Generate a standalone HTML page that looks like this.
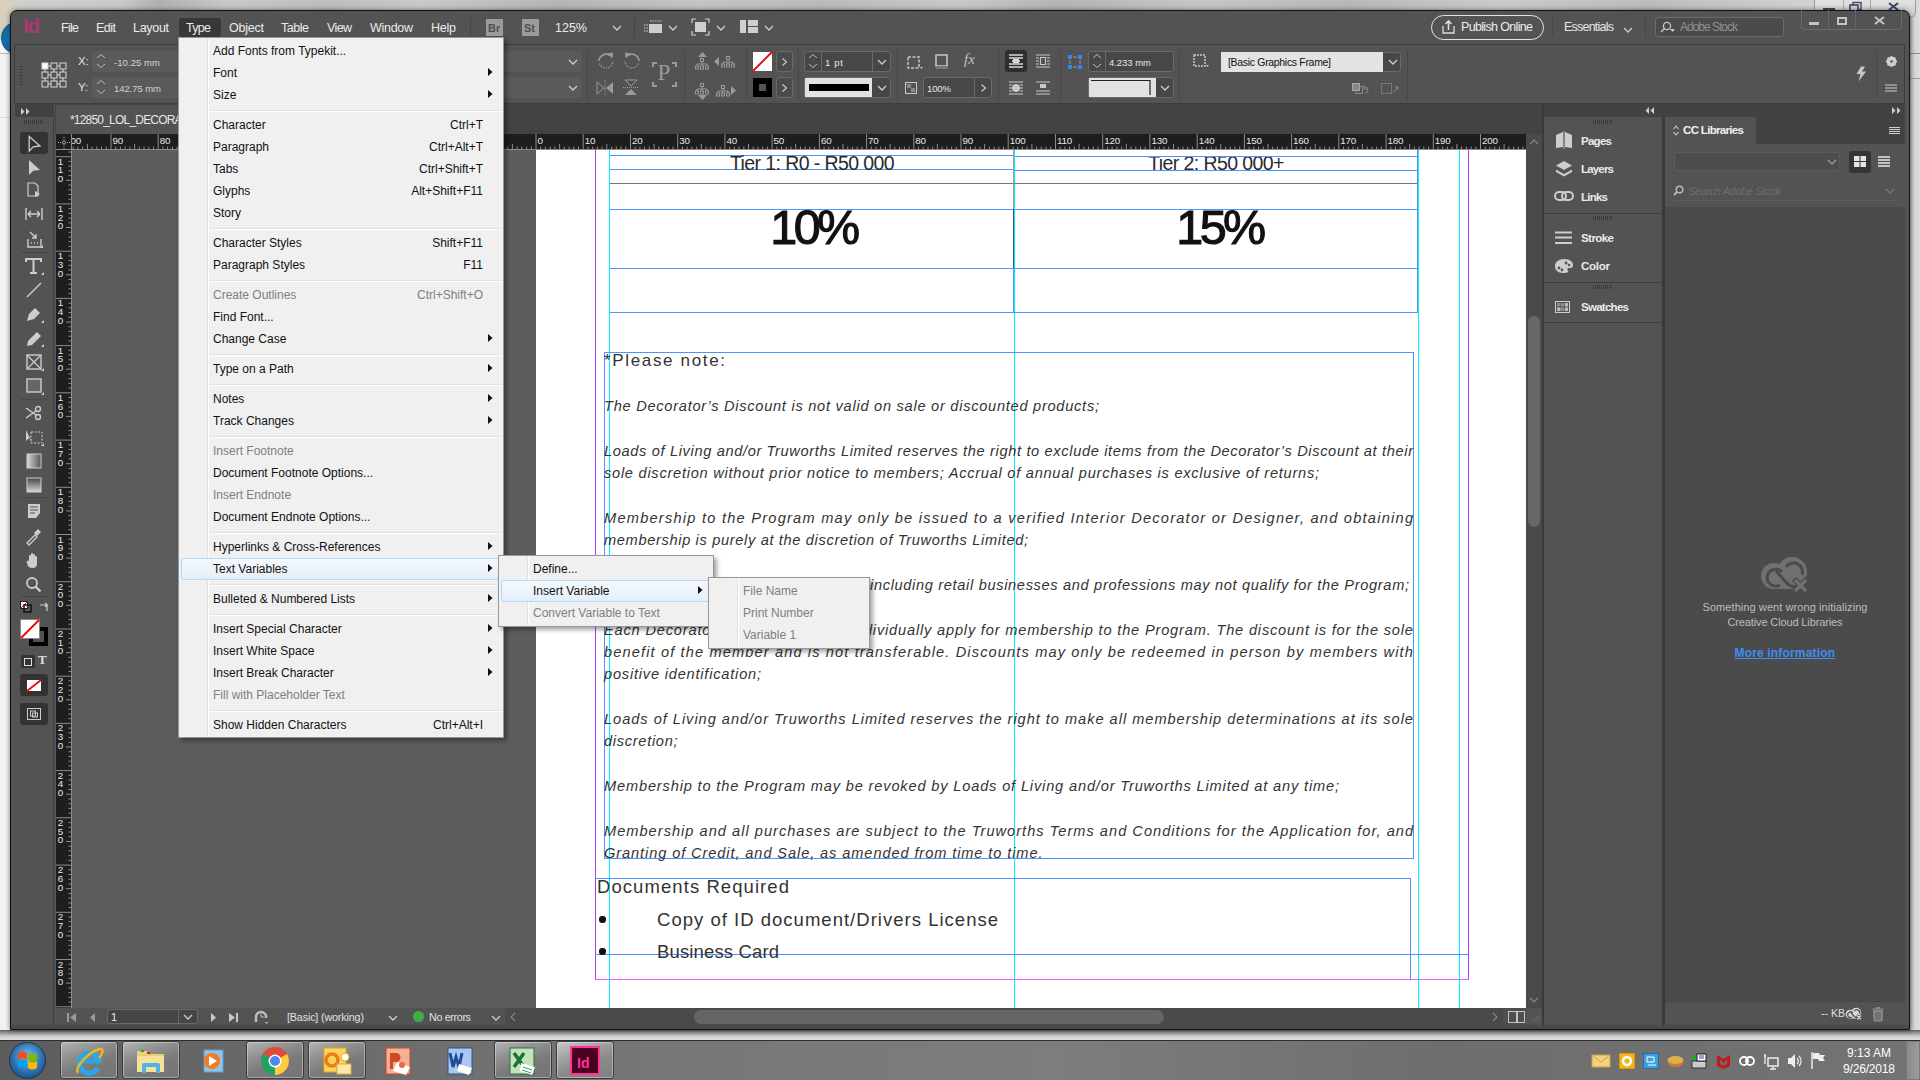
<!DOCTYPE html>
<html><head><meta charset="utf-8">
<style>
*{box-sizing:border-box;margin:0;padding:0}
html,body{width:1920px;height:1080px;overflow:hidden}
body{position:relative;background:#ececec;font-family:"Liberation Sans",sans-serif;font-size:12px;color:#ddd}
.a{position:absolute}
.t{position:absolute;white-space:nowrap;line-height:1}
svg{overflow:visible}
</style></head>
<body>
<div class="a" style="left:0px;top:0px;width:1920px;height:40px;background:linear-gradient(90deg,#d9d0b8 0,#cfcfcf 30px,#c9c9c9 120px,#b0b0b0 160px,#c8c8c8 230px,#bdbdbd 330px,#c9c9c9 420px,#b5b5b5 560px,#c4c4c4 700px,#bababa 820px,#c8c8c8 960px,#b4b4b4 1060px,#c6c6c6 1200px,#b8b8b8 1350px,#cacaca 1500px,#bcbcbc 1650px,#d0d0d0 1800px,#d8d8d8 1920px)"></div>
<div class="a" style="left:0px;top:40px;width:12px;height:1000px;background:#f2f2f2"></div>
<div class="a" style="left:0px;top:53px;width:12px;height:1px;background:#b9b9b9"></div>
<div class="a" style="left:0px;top:117px;width:12px;height:1px;background:#dadada"></div>
<div class="a" style="left:1px;top:22px;width:30px;height:32px;border-radius:50%;background:radial-gradient(circle at 60% 50%,#1e86c0,#0c5d93)"></div>
<div class="a" style="left:1908px;top:0px;width:12px;height:1040px;background:linear-gradient(90deg,#9a9a9a,#d4d4d4 50%,#dedede)"></div>
<div class="a" style="left:1910px;top:53px;width:10px;height:1px;background:#8a8a8a"></div>
<div class="a" style="left:1910px;top:78px;width:10px;height:1px;background:#9a9a9a"></div>
<div class="a" style="left:0px;top:1030px;width:1920px;height:10px;background:linear-gradient(#5e5e5e,#8f8f8f 25%,#c9c9c9 60%,#e6e6e6)"></div>
<div class="a" style="left:1814px;top:-4px;width:102px;height:21px;border:1px solid #9c9c9c;border-radius:0 0 4px 4px;background:linear-gradient(#e6e6e6,#cfcfcf)"></div>
<div class="a" style="left:1843px;top:0px;width:1px;height:16px;background:#a9a9a9"></div>
<div class="a" style="left:1870px;top:0px;width:1px;height:16px;background:#a9a9a9"></div>
<svg class="a" style="left:1888px;top:3px;" width="11" height="7" viewBox="0 0 11 7"><path d="M1 0l9 7M10 0L1 7" stroke="#3d4a66" stroke-width="2.2"/></svg>
<svg class="a" style="left:1849px;top:2px;" width="13" height="9" viewBox="0 0 13 9"><rect x="4" y="0.5" width="8" height="7" fill="none" stroke="#3d4a66" stroke-width="1.4"/><rect x="1" y="3" width="8" height="6" fill="#d6d6d6" stroke="#3d4a66" stroke-width="1.6"/></svg>
<div class="a" style="left:1823px;top:8px;width:12px;height:2px;background:#3d4a66"></div>
<div class="a" style="left:10px;top:10px;width:1900px;height:1020px;background:#535353;border:1px solid #111;border-radius:7px 7px 0 0;box-shadow:0 0 5px rgba(0,0,0,.5)"></div>
<div class="a" style="left:11px;top:1025px;width:1898px;height:4px;background:#4a4a4a"></div>
<div class="t" style="left:23px;top:15.95px;font-size:20.5px;color:#ab3a70;letter-spacing:-1.219px;font-weight:bold;">Id</div>
<div class="a" style="left:179px;top:18px;width:42px;height:19px;background:#383838;border-radius:3px"></div>
<div class="t" style="left:61px;top:22.22px;font-size:12.5px;color:#ececec;letter-spacing:-0.719px;">File</div>
<div class="t" style="left:96px;top:22.22px;font-size:12.5px;color:#ececec;letter-spacing:-0.516px;">Edit</div>
<div class="t" style="left:133px;top:22.22px;font-size:12.5px;color:#ececec;letter-spacing:-0.306px;">Layout</div>
<div class="t" style="left:186px;top:22.22px;font-size:12.5px;color:#ececec;letter-spacing:-0.703px;">Type</div>
<div class="t" style="left:229px;top:22.22px;font-size:12.5px;color:#ececec;letter-spacing:-0.228px;">Object</div>
<div class="t" style="left:281px;top:22.22px;font-size:12.5px;color:#ececec;letter-spacing:-0.473px;">Table</div>
<div class="t" style="left:327px;top:22.22px;font-size:12.5px;color:#ececec;letter-spacing:-0.625px;">View</div>
<div class="t" style="left:370px;top:22.22px;font-size:12.5px;color:#ececec;letter-spacing:-0.294px;">Window</div>
<div class="t" style="left:431px;top:22.22px;font-size:12.5px;color:#ececec;letter-spacing:-0.240px;">Help</div>
<div class="a" style="left:470px;top:17px;width:1px;height:20px;background:#454545"></div>
<div class="a" style="left:486px;top:19px;width:17px;height:17px;background:#9b9b9b"></div>
<div class="t" style="left:488px;top:22.69px;font-size:11px;color:#4e4e4e;font-weight:bold;">Br</div>
<div class="a" style="left:522px;top:19px;width:17px;height:17px;background:#9b9b9b"></div>
<div class="t" style="left:524px;top:22.69px;font-size:11px;color:#4e4e4e;font-weight:bold;">St</div>
<div class="t" style="left:555px;top:22.22px;font-size:12.5px;color:#ececec;letter-spacing:0.005px;">125%</div>
<svg class="a" style="left:612px;top:25px;" width="10" height="6" viewBox="0 0 10 6"><path d="M1 1 L5.0 5 L9 1" fill="none" stroke="#cfcfcf" stroke-width="1.3"/></svg>
<div class="a" style="left:634px;top:17px;width:1px;height:20px;background:#444"></div>
<svg class="a" style="left:644px;top:20px;" width="20" height="14" viewBox="0 0 20 14"><rect x="5" y="4" width="13" height="9" fill="#cfcfcf"/><path d="M0 5h4M0 8h4M0 11h4M6 1h12" stroke="#cfcfcf" stroke-dasharray="1.5 1"/></svg>
<svg class="a" style="left:668px;top:25px;" width="10" height="6" viewBox="0 0 10 6"><path d="M1 1 L5.0 5 L9 1" fill="none" stroke="#cfcfcf" stroke-width="1.3"/></svg>
<svg class="a" style="left:692px;top:19px;" width="17" height="16" viewBox="0 0 17 16"><rect x="3" y="3" width="11" height="10" fill="#cfcfcf"/><path d="M0 4V0h4M13 0h4v4M17 12v4h-4M4 16H0v-4" fill="none" stroke="#cfcfcf" stroke-width="1.2"/></svg>
<svg class="a" style="left:716px;top:25px;" width="10" height="6" viewBox="0 0 10 6"><path d="M1 1 L5.0 5 L9 1" fill="none" stroke="#cfcfcf" stroke-width="1.3"/></svg>
<svg class="a" style="left:740px;top:20px;" width="18" height="13" viewBox="0 0 18 13"><rect x="0" y="0" width="6" height="13" fill="#cfcfcf"/><rect x="8" y="0" width="10" height="6" fill="#cfcfcf"/><rect x="8" y="7" width="10" height="6" fill="#cfcfcf"/></svg>
<svg class="a" style="left:764px;top:25px;" width="10" height="6" viewBox="0 0 10 6"><path d="M1 1 L5.0 5 L9 1" fill="none" stroke="#cfcfcf" stroke-width="1.3"/></svg>
<div class="a" style="left:1431px;top:15px;width:113px;height:25px;border:1.5px solid #e3e3e3;border-radius:13px"></div>
<svg class="a" style="left:1442px;top:20px;" width="13" height="14" viewBox="0 0 13 14"><path d="M1 6v7h11V6" fill="none" stroke="#ddd" stroke-width="1.3"/><path d="M6.5 10V1M3.5 4l3-3 3 3" fill="none" stroke="#ddd" stroke-width="1.6"/></svg>
<div class="t" style="left:1461px;top:21.42px;font-size:12.5px;color:#ececec;letter-spacing:-0.662px;">Publish Online</div>
<div class="a" style="left:1552px;top:17px;width:1px;height:20px;background:#474747"></div>
<div class="t" style="left:1564px;top:21.42px;font-size:12.5px;color:#e6e6e6;letter-spacing:-0.776px;">Essentials</div>
<svg class="a" style="left:1623px;top:27px;" width="10" height="6" viewBox="0 0 10 6"><path d="M1 1 L5.0 5 L9 1" fill="none" stroke="#cfcfcf" stroke-width="1.3"/></svg>
<div class="a" style="left:1645px;top:17px;width:1px;height:20px;background:#474747"></div>
<div class="a" style="left:1655px;top:17px;width:129px;height:20px;background:#4b4b4b;border:1px solid #6a6a6a;border-radius:3px"></div>
<svg class="a" style="left:1660px;top:21px;" width="16" height="12" viewBox="0 0 16 12"><circle cx="7" cy="5" r="3.6" fill="none" stroke="#c8c8c8" stroke-width="1.3"/><path d="M4.5 7.5L1 11" stroke="#c8c8c8" stroke-width="1.5"/><path d="M10 8h5l-2.5 3z" fill="#c8c8c8"/></svg>
<div class="t" style="left:1680px;top:20.84px;font-size:12px;color:#8f8f8f;letter-spacing:-1.005px;">Adobe Stock</div>
<div class="a" style="left:1801px;top:10px;width:101px;height:20px;border:1px solid #6a6a6a;border-top:none;border-radius:0 0 4px 4px"></div>
<div class="a" style="left:1828px;top:10px;width:1px;height:19px;background:#666"></div>
<div class="a" style="left:1855px;top:10px;width:1px;height:19px;background:#666"></div>
<div class="a" style="left:1809px;top:22px;width:10px;height:3px;background:#c4c4c4"></div>
<div class="a" style="left:1837px;top:17px;width:10px;height:8px;border:2px solid #c4c4c4"></div>
<svg class="a" style="left:1874px;top:16px;" width="11" height="9" viewBox="0 0 11 9"><path d="M1 1l9 7M10 1L1 8" stroke="#c4c4c4" stroke-width="2"/></svg>
<div class="a" style="left:14px;top:44px;width:1891px;height:60px;background:#535353;border:1px solid #3e3e3e"></div>
<div class="a" style="left:19px;top:66px;width:4px;height:1px;background:#3d3d3d"></div>
<div class="a" style="left:19px;top:69px;width:4px;height:1px;background:#3d3d3d"></div>
<div class="a" style="left:19px;top:72px;width:4px;height:1px;background:#3d3d3d"></div>
<div class="a" style="left:19px;top:75px;width:4px;height:1px;background:#3d3d3d"></div>
<div class="a" style="left:19px;top:78px;width:4px;height:1px;background:#3d3d3d"></div>
<div class="a" style="left:19px;top:81px;width:4px;height:1px;background:#3d3d3d"></div>
<div class="a" style="left:19px;top:84px;width:4px;height:1px;background:#3d3d3d"></div>
<svg class="a" style="left:41px;top:62px;" width="27" height="26" viewBox="0 0 27 26"><rect x="1" y="1" width="6" height="6" fill="#fff" stroke="#d8d8d8" stroke-width="1"/><rect x="10" y="1" width="6" height="6" fill="none" stroke="#d8d8d8" stroke-width="1"/><rect x="19" y="1" width="6" height="6" fill="none" stroke="#d8d8d8" stroke-width="1"/><rect x="1" y="10" width="6" height="6" fill="none" stroke="#d8d8d8" stroke-width="1"/><rect x="10" y="10" width="6" height="6" fill="none" stroke="#d8d8d8" stroke-width="1"/><rect x="19" y="10" width="6" height="6" fill="none" stroke="#d8d8d8" stroke-width="1"/><rect x="1" y="19" width="6" height="6" fill="none" stroke="#d8d8d8" stroke-width="1"/><rect x="10" y="19" width="6" height="6" fill="none" stroke="#d8d8d8" stroke-width="1"/><rect x="19" y="19" width="6" height="6" fill="none" stroke="#d8d8d8" stroke-width="1"/><path d="M7 4h3M16 4h3M7 13h3M16 13h3M7 22h3M16 22h3M4 7v3M13 7v3M22 7v3M4 16v3M13 16v3M22 16v3" stroke="#d8d8d8"/></svg>
<div class="t" style="left:78px;top:56.27px;font-size:11.5px;color:#e0e0e0;">X:</div>
<div class="t" style="left:78px;top:82.27px;font-size:11.5px;color:#e0e0e0;">Y:</div>
<div class="a" style="left:92px;top:51px;width:90px;height:21px;background:#5a5a5a;border-radius:3px"></div>
<svg class="a" style="left:96px;top:53px;" width="10" height="16" viewBox="0 0 10 16"><path d="M1 5l4-3.5 4 3.5M1 11l4 3.5 4-3.5" fill="none" stroke="#bdbdbd" stroke-width="1"/></svg>
<div class="t" style="left:114px;top:57.96px;font-size:9.5px;color:#d2d2d2;letter-spacing:0.074px;">-10.25 mm</div>
<div class="a" style="left:92px;top:77px;width:90px;height:21px;background:#5a5a5a;border-radius:3px"></div>
<svg class="a" style="left:96px;top:79px;" width="10" height="16" viewBox="0 0 10 16"><path d="M1 5l4-3.5 4 3.5M1 11l4 3.5 4-3.5" fill="none" stroke="#bdbdbd" stroke-width="1"/></svg>
<div class="t" style="left:114px;top:83.96px;font-size:9.5px;color:#d2d2d2;letter-spacing:-0.066px;">142.75 mm</div>
<div class="a" style="left:500px;top:51px;width:82px;height:21px;background:#5a5a5a;border-radius:3px"></div>
<svg class="a" style="left:568px;top:59px;" width="10" height="6" viewBox="0 0 10 6"><path d="M1 1 L5.0 5 L9 1" fill="none" stroke="#cfcfcf" stroke-width="1.3"/></svg>
<div class="a" style="left:500px;top:77px;width:82px;height:21px;background:#5a5a5a;border-radius:3px"></div>
<svg class="a" style="left:568px;top:85px;" width="10" height="6" viewBox="0 0 10 6"><path d="M1 1 L5.0 5 L9 1" fill="none" stroke="#cfcfcf" stroke-width="1.3"/></svg>
<div class="a" style="left:587px;top:49px;width:1px;height:51px;background:#474747"></div>
<svg class="a" style="left:597px;top:52px;" width="18" height="18" viewBox="0 0 18 18"><path d="M2 9A7 7 0 0 1 13 3.5" fill="none" stroke="#9a9a9a" stroke-width="1.6"/><path d="M2.5 11.5A7 7 0 0 0 16 9" fill="none" stroke="#9a9a9a" stroke-width="1.4" stroke-dasharray="1.3 1.3"/><path d="M10 1.5l6-1-0.5 6z" fill="#9a9a9a"/></svg>
<svg class="a" style="left:623px;top:52px;" width="18" height="18" viewBox="0 0 18 18"><path d="M16 9A7 7 0 0 0 5 3.5" fill="none" stroke="#9a9a9a" stroke-width="1.6"/><path d="M15.5 11.5A7 7 0 0 1 2 9" fill="none" stroke="#9a9a9a" stroke-width="1.4" stroke-dasharray="1.3 1.3"/><path d="M8 1.5l-6-1 0.5 6z" fill="#9a9a9a"/></svg>
<svg class="a" style="left:596px;top:80px;" width="18" height="16" viewBox="0 0 18 16"><path d="M1 2l7 6-7 6z" fill="none" stroke="#9a9a9a"/><path d="M17 2l-7 6 7 6z" fill="#9a9a9a"/><path d="M9 0v16" stroke="#9a9a9a" stroke-dasharray="1 1"/></svg>
<svg class="a" style="left:623px;top:79px;" width="16" height="17" viewBox="0 0 16 17"><path d="M2 1h12l-6 6z" fill="none" stroke="#9a9a9a"/><path d="M2 16h12l-6-6z" fill="#9a9a9a"/><path d="M0 8.5h16" stroke="#9a9a9a" stroke-dasharray="1 1"/></svg>
<svg class="a" style="left:652px;top:62px;" width="25" height="25" viewBox="0 0 25 25"><path d="M1 5V1h4M20 1h4v4M24 20v4h-4M5 24H1v-4" fill="none" stroke="#9a9a9a" stroke-width="2"/></svg>
<div class="t" style="left:657.5px;top:60.5px;font-size:23px;color:#9a9a9a;font-family:'Liberation Serif',serif">P</div>
<div class="a" style="left:684px;top:49px;width:1px;height:51px;background:#474747"></div>
<svg class="a" style="left:695px;top:58px;" width="14" height="11" viewBox="0 0 14 11"><rect x="5.5" y="0.5" width="3" height="3" fill="none" stroke="#9a9a9a"/><path d="M7 4v2M2 6h10M2 6v2M7 6v2M12 6v2" stroke="#9a9a9a"/><rect x="0.5" y="8" width="3" height="3" fill="none" stroke="#9a9a9a"/><rect x="5.5" y="8" width="3" height="3" fill="none" stroke="#9a9a9a"/><rect x="10.5" y="8" width="3" height="3" fill="none" stroke="#9a9a9a"/></svg>
<svg class="a" style="left:698px;top:52px;" width="9" height="5" viewBox="0 0 9 5"><path d="M0 5h9L4.5 0z" fill="#9a9a9a"/></svg>
<svg class="a" style="left:721px;top:56px;" width="14" height="11" viewBox="0 0 14 11"><rect x="5.5" y="0.5" width="3" height="3" fill="none" stroke="#9a9a9a"/><path d="M7 4v2M2 6h10M2 6v2M7 6v2M12 6v2" stroke="#9a9a9a"/><rect x="0.5" y="8" width="3" height="3" fill="none" stroke="#9a9a9a"/><rect x="5.5" y="8" width="3" height="3" fill="none" stroke="#9a9a9a"/><rect x="10.5" y="8" width="3" height="3" fill="none" stroke="#9a9a9a"/></svg>
<svg class="a" style="left:714px;top:57px;" width="5" height="9" viewBox="0 0 5 9"><path d="M5 0v9L0 4.5z" fill="#9a9a9a"/></svg>
<svg class="a" style="left:695px;top:83px;" width="14" height="11" viewBox="0 0 14 11"><rect x="5.5" y="0.5" width="3" height="3" fill="none" stroke="#9a9a9a"/><path d="M7 4v2M2 6h10M2 6v2M7 6v2M12 6v2" stroke="#9a9a9a"/><rect x="0.5" y="8" width="3" height="3" fill="none" stroke="#9a9a9a"/><rect x="5.5" y="8" width="3" height="3" fill="none" stroke="#9a9a9a"/><rect x="10.5" y="8" width="3" height="3" fill="none" stroke="#9a9a9a"/></svg>
<svg class="a" style="left:698px;top:95px;" width="9" height="5" viewBox="0 0 9 5"><path d="M0 0h9L4.5 5z" fill="#9a9a9a"/></svg>
<svg class="a" style="left:716px;top:85px;" width="14" height="11" viewBox="0 0 14 11"><rect x="5.5" y="0.5" width="3" height="3" fill="none" stroke="#9a9a9a"/><path d="M7 4v2M2 6h10M2 6v2M7 6v2M12 6v2" stroke="#9a9a9a"/><rect x="0.5" y="8" width="3" height="3" fill="none" stroke="#9a9a9a"/><rect x="5.5" y="8" width="3" height="3" fill="none" stroke="#9a9a9a"/><rect x="10.5" y="8" width="3" height="3" fill="none" stroke="#9a9a9a"/></svg>
<svg class="a" style="left:731px;top:86px;" width="5" height="9" viewBox="0 0 5 9"><path d="M0 0v9L5 4.5z" fill="#9a9a9a"/></svg>
<div class="a" style="left:746px;top:49px;width:1px;height:51px;background:#474747"></div>
<div class="a" style="left:753px;top:52px;width:19px;height:19px;background:#fff"></div>
<svg class="a" style="left:753px;top:52px;" width="19" height="19" viewBox="0 0 19 19"><path d="M0 19L19 0" stroke="#e00" stroke-width="1.8"/></svg>
<div class="a" style="left:753px;top:78px;width:19px;height:19px;background:#000"></div>
<div class="a" style="left:759px;top:84px;width:7px;height:7px;background:#555"></div>
<div class="a" style="left:776px;top:51px;width:17px;height:21px;border:1px solid #6a6a6a;border-radius:3px;background:#4b4b4b"></div>
<svg class="a" style="left:782px;top:58px;" width="5" height="8" viewBox="0 0 5 8"><path d="M0.5 0.5l4 3.5-4 3.5" fill="none" stroke="#cfcfcf" stroke-width="1.1"/></svg>
<div class="a" style="left:776px;top:77px;width:17px;height:21px;border:1px solid #6a6a6a;border-radius:3px;background:#4b4b4b"></div>
<svg class="a" style="left:782px;top:84px;" width="5" height="8" viewBox="0 0 5 8"><path d="M0.5 0.5l4 3.5-4 3.5" fill="none" stroke="#cfcfcf" stroke-width="1.1"/></svg>
<div class="a" style="left:798px;top:49px;width:1px;height:51px;background:#474747"></div>
<div class="a" style="left:804px;top:51px;width:87px;height:21px;border:1px solid #6a6a6a;border-radius:3px;background:#474747"></div>
<div class="a" style="left:821px;top:52px;width:1px;height:19px;background:#6a6a6a"></div>
<div class="a" style="left:872px;top:52px;width:1px;height:19px;background:#6a6a6a"></div>
<svg class="a" style="left:808px;top:53px;" width="10" height="16" viewBox="0 0 10 16"><path d="M1 5l4-3.5 4 3.5M1 11l4 3.5 4-3.5" fill="none" stroke="#bdbdbd" stroke-width="1"/></svg>
<div class="t" style="left:825px;top:57.96px;font-size:9.5px;color:#e8e8e8;letter-spacing:0.714px;">1 pt</div>
<svg class="a" style="left:877px;top:59px;" width="10" height="6" viewBox="0 0 10 6"><path d="M1 1 L5.0 5 L9 1" fill="none" stroke="#cfcfcf" stroke-width="1.3"/></svg>
<div class="a" style="left:804px;top:77px;width:87px;height:21px;border:1px solid #6a6a6a;border-radius:3px;background:#474747"></div>
<div class="a" style="left:805px;top:78px;width:67px;height:19px;background:#e2e2e2"></div>
<div class="a" style="left:809px;top:84px;width:60px;height:7px;background:#000"></div>
<svg class="a" style="left:877px;top:85px;" width="10" height="6" viewBox="0 0 10 6"><path d="M1 1 L5.0 5 L9 1" fill="none" stroke="#cfcfcf" stroke-width="1.3"/></svg>
<div class="a" style="left:897px;top:49px;width:1px;height:51px;background:#474747"></div>
<svg class="a" style="left:906px;top:55px;" width="17" height="15" viewBox="0 0 17 15"><rect x="2" y="2" width="11" height="11" fill="none" stroke="#c8c8c8" stroke-width="1.5" stroke-dasharray="3 1.5"/><path d="M14 12h3l-1.5 2z" fill="#c8c8c8"/></svg>
<svg class="a" style="left:935px;top:54px;" width="14" height="16" viewBox="0 0 14 16"><rect x="1" y="1" width="11" height="11" fill="none" stroke="#c8c8c8" stroke-width="1.5"/><rect x="1" y="12" width="12" height="3" fill="#777"/></svg>
<div class="t" style="left:964px;top:52px;font-size:15px;color:#c0c0c0;font-style:italic;font-family:'Liberation Serif',serif">fx</div>
<svg class="a" style="left:905px;top:82px;" width="12" height="12" viewBox="0 0 12 12"><rect x="0.5" y="0.5" width="11" height="11" fill="none" stroke="#c8c8c8"/><rect x="2" y="2" width="4" height="4" fill="#888"/><rect x="6" y="6" width="4" height="4" fill="#888"/></svg>
<div class="a" style="left:923px;top:77px;width:69px;height:21px;border:1px solid #6a6a6a;border-radius:3px;background:#474747"></div>
<div class="a" style="left:974px;top:78px;width:1px;height:19px;background:#6a6a6a"></div>
<div class="t" style="left:927px;top:83.96px;font-size:9.5px;color:#e8e8e8;letter-spacing:-0.104px;">100%</div>
<svg class="a" style="left:981px;top:84px;" width="5" height="8" viewBox="0 0 5 8"><path d="M0.5 0.5l4 3.5-4 3.5" fill="none" stroke="#cfcfcf" stroke-width="1.1"/></svg>
<div class="a" style="left:998px;top:49px;width:1px;height:51px;background:#474747"></div>
<div class="a" style="left:1005px;top:50px;width:22px;height:22px;background:#2f2f2f;border-radius:3px"></div>
<svg class="a" style="left:1009px;top:54px;" width="14" height="14" viewBox="0 0 14 14"><path d="M0 1h14M0 4h14M0 10h14M0 13h14M3 7h8" stroke="#d8d8d8" stroke-width="1.3"/><rect x="4" y="5" width="6" height="4" fill="#d8d8d8"/></svg>
<svg class="a" style="left:1036px;top:54px;" width="14" height="14" viewBox="0 0 14 14"><path d="M0 1h14M0 13h14M0 4h3M11 4h3M0 7h3M11 7h3M0 10h3M11 10h3" stroke="#c8c8c8" stroke-width="1.2"/><rect x="4.5" y="3.5" width="5" height="7" fill="none" stroke="#c8c8c8"/></svg>
<svg class="a" style="left:1009px;top:81px;" width="14" height="14" viewBox="0 0 14 14"><path d="M0 1h14M0 13h14M0 4h3M11 4h3M0 7h3M11 7h3M0 10h3M11 10h3" stroke="#c8c8c8" stroke-width="1.2"/><circle cx="7" cy="7" r="4" fill="#c8c8c8"/></svg>
<svg class="a" style="left:1036px;top:81px;" width="14" height="14" viewBox="0 0 14 14"><path d="M0 1h14M0 10h14M0 13h14" stroke="#c8c8c8" stroke-width="1.2"/><rect x="4" y="3" width="6" height="4" fill="#c8c8c8"/></svg>
<div class="a" style="left:1060px;top:49px;width:1px;height:51px;background:#474747"></div>
<svg class="a" style="left:1068px;top:55px;" width="14" height="14" viewBox="0 0 14 14"><rect x="0" y="0" width="4" height="4" fill="#2d8ceb"/><rect x="10" y="0" width="4" height="4" fill="#2d8ceb"/><rect x="0" y="10" width="4" height="4" fill="#2d8ceb"/><rect x="10" y="10" width="4" height="4" fill="#2d8ceb"/><path d="M5 2h4M5 12h4M2 5v4M12 5v4" stroke="#999"/></svg>
<div class="a" style="left:1088px;top:51px;width:86px;height:21px;border:1px solid #6a6a6a;border-radius:3px;background:#474747"></div>
<div class="a" style="left:1105px;top:52px;width:1px;height:19px;background:#6a6a6a"></div>
<svg class="a" style="left:1092px;top:53px;" width="10" height="16" viewBox="0 0 10 16"><path d="M1 5l4-3.5 4 3.5M1 11l4 3.5 4-3.5" fill="none" stroke="#bdbdbd" stroke-width="1"/></svg>
<div class="t" style="left:1109px;top:57.96px;font-size:9.5px;color:#e8e8e8;letter-spacing:-0.036px;">4.233 mm</div>
<div class="a" style="left:1088px;top:77px;width:86px;height:21px;border:1px solid #6a6a6a;border-radius:3px;background:#474747"></div>
<div class="a" style="left:1089px;top:78px;width:67px;height:19px;background:#e2e2e2"></div>
<svg class="a" style="left:1090px;top:80px;" width="62" height="15" viewBox="0 0 62 15"><path d="M1 0.5H60V15" fill="none" stroke="#222" stroke-width="1.2"/></svg>
<svg class="a" style="left:1160px;top:85px;" width="10" height="6" viewBox="0 0 10 6"><path d="M1 1 L5.0 5 L9 1" fill="none" stroke="#cfcfcf" stroke-width="1.3"/></svg>
<div class="a" style="left:1179px;top:49px;width:1px;height:51px;background:#474747"></div>
<svg class="a" style="left:1193px;top:54px;" width="16" height="14" viewBox="0 0 16 14"><rect x="1" y="1" width="11" height="11" fill="none" stroke="#c8c8c8" stroke-width="1.5" stroke-dasharray="2 1"/><path d="M13 11h3l-1.5 2z" fill="#c8c8c8"/></svg>
<div class="a" style="left:1221px;top:52px;width:180px;height:20px;border:1px solid #6a6a6a;border-radius:3px;background:#474747"></div>
<div class="a" style="left:1221px;top:52px;width:162px;height:20px;background:#e3e3e3"></div>
<div class="t" style="left:1228px;top:57.11px;font-size:10.5px;color:#111;letter-spacing:-0.319px;">[Basic Graphics Frame]</div>
<svg class="a" style="left:1388px;top:59px;" width="10" height="6" viewBox="0 0 10 6"><path d="M1 1 L5.0 5 L9 1" fill="none" stroke="#cfcfcf" stroke-width="1.3"/></svg>
<svg class="a" style="left:1352px;top:83px;" width="20" height="12" viewBox="0 0 20 12"><rect x="0.5" y="0.5" width="7" height="7" fill="#888" stroke="#aaa"/><rect x="3.5" y="3.5" width="7" height="7" fill="none" stroke="#888"/><path d="M13 4a3 3 0 1 1 0 6" fill="none" stroke="#888"/><path d="M12 2v4h3" fill="none" stroke="#888"/></svg>
<svg class="a" style="left:1381px;top:83px;" width="18" height="12" viewBox="0 0 18 12"><rect x="0.5" y="0.5" width="10" height="10" fill="none" stroke="#888" stroke-dasharray="2 1"/><path d="M12 10l5-6M14 4h3v3" stroke="#888" fill="none"/></svg>
<div class="a" style="left:1407px;top:49px;width:1px;height:51px;background:#474747"></div>
<svg class="a" style="left:1856px;top:66px;" width="11" height="16" viewBox="0 0 11 16"><path d="M5 0.5L0.5 8h4L2.5 15.5 10 5.5H6l3-5z" fill="#c8c8c8"/></svg>
<div class="a" style="left:1876px;top:50px;width:1px;height:48px;background:#474747"></div>
<svg class="a" style="left:1886px;top:56px;" width="11" height="11" viewBox="0 0 11 11"><circle cx="5.5" cy="5.5" r="3.6" fill="none" stroke="#d0d0d0" stroke-width="2.4"/><path d="M5.5 0v11M0 5.5h11M1.6 1.6l7.8 7.8M9.4 1.6l-7.8 7.8" stroke="#d0d0d0" stroke-width="1.8"/><circle cx="5.5" cy="5.5" r="1.3" fill="#535353"/></svg>
<svg class="a" style="left:1885px;top:84px;" width="12" height="8" viewBox="0 0 12 8"><path d="M0 1h12M0 4h12M0 7h12" stroke="#d0d0d0" stroke-width="1.1"/></svg>
<div class="a" style="left:15px;top:104px;width:39px;height:921px;background:#535353;border-right:1px solid #3e3e3e"></div>
<div class="a" style="left:15px;top:104px;width:39px;height:13px;background:#424242"></div>
<svg class="a" style="left:21px;top:108px;" width="10" height="7" viewBox="0 0 10 7"><path d="M0 0l3.5 3.5L0 7zM5 0l3.5 3.5L5 7z" fill="#cfcfcf"/></svg>
<div class="a" style="left:24px;top:120px;width:1px;height:4px;background:#3a3a3a"></div>
<div class="a" style="left:26px;top:120px;width:1px;height:4px;background:#3a3a3a"></div>
<div class="a" style="left:28px;top:120px;width:1px;height:4px;background:#3a3a3a"></div>
<div class="a" style="left:30px;top:120px;width:1px;height:4px;background:#3a3a3a"></div>
<div class="a" style="left:32px;top:120px;width:1px;height:4px;background:#3a3a3a"></div>
<div class="a" style="left:34px;top:120px;width:1px;height:4px;background:#3a3a3a"></div>
<div class="a" style="left:36px;top:120px;width:1px;height:4px;background:#3a3a3a"></div>
<div class="a" style="left:38px;top:120px;width:1px;height:4px;background:#3a3a3a"></div>
<div class="a" style="left:40px;top:120px;width:1px;height:4px;background:#3a3a3a"></div>
<div class="a" style="left:42px;top:120px;width:1px;height:4px;background:#3a3a3a"></div>
<div class="a" style="left:20px;top:132px;width:28px;height:22px;background:#333;border-radius:3px"></div>
<svg class="a" style="left:28px;top:135px;" width="13" height="17" viewBox="0 0 13 17"><path d="M1.2 1.5V16l4-4.2 6.8-0.8z" fill="none" stroke="#cdcdcd" stroke-width="1.3" stroke-linejoin="miter"/></svg>
<svg class="a" style="left:28px;top:159px;" width="13" height="17" viewBox="0 0 13 17"><path d="M1 1V16l4.2-4.2 6.8-0.8z" fill="#cdcdcd"/></svg>
<svg class="a" style="left:27px;top:182px;" width="14" height="16" viewBox="0 0 14 16"><path d="M1 1h7l3 3v10H1z" fill="none" stroke="#cdcdcd" stroke-width="1.2"/><path d="M8 9l5 3-5 3z" fill="#cdcdcd"/></svg>
<svg class="a" style="left:25px;top:208px;" width="18" height="12" viewBox="0 0 18 12"><path d="M1 0v12M17 0v12M3 6h12M3 6l3-3M3 6l3 3M15 6l-3-3M15 6l-3 3" fill="none" stroke="#cdcdcd" stroke-width="1.4"/></svg>
<svg class="a" style="left:26px;top:231px;" width="17" height="17" viewBox="0 0 17 17"><path d="M2 8v8h13V8" fill="none" stroke="#cdcdcd" stroke-width="1.4"/><path d="M4 1l6 6M10 3v4H6" fill="none" stroke="#cdcdcd" stroke-width="1.4"/><path d="M5 12h1M8 12h1M11 12h1" stroke="#cdcdcd" stroke-width="1.5"/><path d="M17 17h-3l3-3z" fill="#cdcdcd"/></svg>
<div class="a" style="left:20px;top:252px;width:29px;height:1px;background:#474747"></div>
<svg class="a" style="left:25px;top:258px;" width="19" height="17" viewBox="0 0 19 17"><path d="M1 4V1h15v3M8.5 1v14M5 15h7" fill="none" stroke="#cdcdcd" stroke-width="2"/><path d="M19 17h-3l3-3z" fill="#cdcdcd"/></svg>
<svg class="a" style="left:26px;top:282px;" width="16" height="16" viewBox="0 0 16 16"><path d="M1 15L15 1" stroke="#cdcdcd" stroke-width="1.5"/></svg>
<svg class="a" style="left:26px;top:306px;" width="18" height="17" viewBox="0 0 18 17"><path d="M1 15l2-7 6-6 5 5-6 6z" fill="#cdcdcd"/><path d="M18 17h-3l3-3z" fill="#cdcdcd"/></svg>
<svg class="a" style="left:26px;top:330px;" width="18" height="17" viewBox="0 0 18 17"><path d="M1 16l1-5 9-9 4 4-9 9z" fill="#cdcdcd"/><path d="M18 17h-3l3-3z" fill="#cdcdcd"/></svg>
<svg class="a" style="left:26px;top:354px;" width="18" height="17" viewBox="0 0 18 17"><rect x="1" y="1" width="14" height="14" fill="none" stroke="#cdcdcd" stroke-width="1.4"/><path d="M1 1l14 14M15 1L1 15" stroke="#cdcdcd" stroke-width="1.2"/><path d="M18 17h-3l3-3z" fill="#cdcdcd"/></svg>
<svg class="a" style="left:26px;top:378px;" width="18" height="17" viewBox="0 0 18 17"><rect x="1" y="1" width="14" height="13" fill="#666" stroke="#cdcdcd" stroke-width="1.4"/><path d="M18 17h-3l3-3z" fill="#cdcdcd"/></svg>
<div class="a" style="left:20px;top:399px;width:29px;height:1px;background:#474747"></div>
<svg class="a" style="left:25px;top:405px;" width="18" height="16" viewBox="0 0 18 16"><circle cx="13" cy="4" r="2.5" fill="none" stroke="#cdcdcd" stroke-width="1.4"/><circle cx="13" cy="12" r="2.5" fill="none" stroke="#cdcdcd" stroke-width="1.4"/><path d="M1 3l10 7M1 13l10-7" stroke="#cdcdcd" stroke-width="1.4"/></svg>
<svg class="a" style="left:25px;top:429px;" width="19" height="17" viewBox="0 0 19 17"><path d="M1 1v11l3-3 3 4" fill="#cdcdcd"/><rect x="6" y="3" width="11" height="11" fill="none" stroke="#cdcdcd" stroke-dasharray="2 1.5"/><path d="M19 17h-3l3-3z" fill="#cdcdcd"/></svg>
<svg class="a" style="left:26px;top:453px;" width="16" height="16" viewBox="0 0 16 16"><defs><linearGradient id="g1" x1="0" x2="1"><stop offset="0" stop-color="#d8d8d8"/><stop offset="1" stop-color="#555"/></linearGradient></defs><rect x="1" y="1" width="14" height="14" fill="url(#g1)" stroke="#cfcfcf"/></svg>
<svg class="a" style="left:26px;top:477px;" width="16" height="16" viewBox="0 0 16 16"><defs><linearGradient id="g2" x1="0" x2="0" y1="0" y2="1"><stop offset="0" stop-color="#444"/><stop offset="1" stop-color="#d8d8d8"/></linearGradient></defs><rect x="1" y="1" width="14" height="14" fill="url(#g2)" stroke="#cfcfcf"/></svg>
<div class="a" style="left:20px;top:497px;width:29px;height:1px;background:#474747"></div>
<svg class="a" style="left:27px;top:503px;" width="15" height="16" viewBox="0 0 15 16"><path d="M1 1h12v9l-4 5H1z" fill="#cdcdcd"/><path d="M3 4h8M3 7h8M3 10h5" stroke="#535353" stroke-width="1.2"/></svg>
<svg class="a" style="left:25px;top:528px;" width="17" height="17" viewBox="0 0 17 17"><path d="M2 15l8-8 2 2-8 8z" fill="none" stroke="#cdcdcd" stroke-width="1.3"/><path d="M9 5l4-4 3 3-4 4z" fill="#cdcdcd"/></svg>
<svg class="a" style="left:25px;top:552px;" width="18" height="17" viewBox="0 0 18 17"><path d="M4 9V4a1 1 0 0 1 2 0v4V2a1 1 0 0 1 2 0v6V3a1 1 0 0 1 2 0v5V5a1 1 0 0 1 2 0v7c0 3-2 4-5 4-2 0-3-1-4-2L2 11a1 1 0 0 1 2-2z" fill="#cdcdcd"/></svg>
<svg class="a" style="left:25px;top:576px;" width="17" height="17" viewBox="0 0 17 17"><circle cx="7" cy="7" r="5" fill="none" stroke="#cdcdcd" stroke-width="1.8"/><path d="M10.5 10.5l5 5" stroke="#cdcdcd" stroke-width="2.4"/></svg>
<div class="a" style="left:20px;top:596px;width:29px;height:1px;background:#474747"></div>
<svg class="a" style="left:20px;top:601px;" width="12" height="12" viewBox="0 0 12 12"><rect x="0.5" y="0.5" width="7" height="7" fill="#fff" stroke="#222"/><path d="M0.5 7.5l7-7" stroke="#e00"/><rect x="4" y="4" width="7" height="7" fill="none" stroke="#111" stroke-width="1.5"/></svg>
<svg class="a" style="left:39px;top:602px;" width="10" height="10" viewBox="0 0 10 10"><path d="M1 3h5a2 2 0 0 1 2 2v4M6 1L8.5 3 6 5" fill="none" stroke="#cdcdcd" stroke-width="1.2"/></svg>
<div class="a" style="left:29px;top:627px;width:19px;height:19px;background:#000"></div>
<div class="a" style="left:33px;top:631px;width:11px;height:11px;background:#535353"></div>
<div class="a" style="left:20px;top:619px;width:20px;height:20px;background:#fff;border:1px solid #888"></div>
<svg class="a" style="left:20px;top:619px;" width="20" height="20" viewBox="0 0 20 20"><path d="M1 19L19 1" stroke="#e00" stroke-width="1.8"/></svg>
<div class="a" style="left:21px;top:655px;width:14px;height:13px;background:#333;border-radius:2px"></div>
<svg class="a" style="left:24px;top:658px;" width="8" height="8" viewBox="0 0 8 8"><rect x="0.5" y="0.5" width="7" height="7" fill="none" stroke="#ddd"/></svg>
<div class="t" style="left:38px;top:653px;font-size:13px;color:#ddd;font-weight:bold;font-family:'Liberation Serif',serif">T</div>
<div class="a" style="left:20px;top:674px;width:28px;height:22px;background:#333;border-radius:3px"></div>
<div class="a" style="left:27px;top:680px;width:14px;height:11px;background:#fff"></div>
<svg class="a" style="left:27px;top:680px;" width="14" height="11" viewBox="0 0 14 11"><path d="M0 11L14 0" stroke="#e00" stroke-width="1.6"/></svg>
<div class="a" style="left:20px;top:703px;width:28px;height:22px;background:#333;border-radius:3px"></div>
<svg class="a" style="left:27px;top:708px;" width="14" height="12" viewBox="0 0 14 12"><rect x="0.5" y="0.5" width="13" height="11" fill="none" stroke="#ccc"/><rect x="3.5" y="3" width="5" height="5" fill="none" stroke="#ccc"/><rect x="5.5" y="5" width="5" height="4" fill="none" stroke="#ccc"/></svg>
<div class="a" style="left:55px;top:104px;width:1487px;height:30px;background:#434343"></div>
<div class="a" style="left:56px;top:105px;width:420px;height:29px;background:#535353"></div>
<div class="t" style="left:70px;top:113.84px;font-size:12px;color:#e6e6e6;letter-spacing:-0.8px">*12850_LOL_DECORATORS_DISCOUNT_APPLICATION_FORM.indd @ 125%</div>
<div class="a" style="left:71px;top:150px;width:1455px;height:858px;background:#5d5d5d"></div>
<div class="a" style="left:536px;top:150px;width:990px;height:858px;background:#fff"></div>
<div class="a" style="left:56px;top:134px;width:1470px;height:16px;background:#1e1e1e"></div>
<div class="a" style="left:56px;top:150px;width:15px;height:858px;background:#1e1e1e"></div>
<div class="a" style="left:56px;top:149px;width:1470px;height:1px;background:#8c8c8c"></div>
<div class="a" style="left:71px;top:134px;width:1px;height:874px;background:#8c8c8c"></div>
<svg class="a" style="left:58px;top:137px;" width="14" height="12" viewBox="0 0 14 12"><path d="M0 5.5h12M6 0v12" stroke="#aaa" stroke-dasharray="1 1.2"/><circle cx="6" cy="5.5" r="1.5" fill="#1e1e1e" stroke="#aaa"/></svg>
<svg class="a" style="left:56px;top:134px;" width="1470" height="15" viewBox="0 0 1470 15"><path d="M7.8 0V15 M12.5 12.5V15 M17.2 12.5V15 M21.9 12.5V15 M26.6 12.5V15 M31.4 10V15 M36.1 12.5V15 M40.8 12.5V15 M45.5 12.5V15 M50.3 12.5V15 M55.0 0V15 M59.7 12.5V15 M64.4 12.5V15 M69.1 12.5V15 M73.9 12.5V15 M78.6 10V15 M83.3 12.5V15 M88.0 12.5V15 M92.8 12.5V15 M97.5 12.5V15 M102.2 0V15 M106.9 12.5V15 M111.6 12.5V15 M116.4 12.5V15 M121.1 12.5V15 M125.8 10V15 M130.5 12.5V15 M135.3 12.5V15 M140.0 12.5V15 M144.7 12.5V15 M149.4 0V15 M154.1 12.5V15 M158.9 12.5V15 M163.6 12.5V15 M168.3 12.5V15 M173.0 10V15 M177.8 12.5V15 M182.5 12.5V15 M187.2 12.5V15 M191.9 12.5V15 M196.6 0V15 M201.4 12.5V15 M206.1 12.5V15 M210.8 12.5V15 M215.5 12.5V15 M220.3 10V15 M225.0 12.5V15 M229.7 12.5V15 M234.4 12.5V15 M239.2 12.5V15 M243.9 0V15 M248.6 12.5V15 M253.3 12.5V15 M258.0 12.5V15 M262.8 12.5V15 M267.5 10V15 M272.2 12.5V15 M276.9 12.5V15 M281.7 12.5V15 M286.4 12.5V15 M291.1 0V15 M295.8 12.5V15 M300.5 12.5V15 M305.3 12.5V15 M310.0 12.5V15 M314.7 10V15 M319.4 12.5V15 M324.2 12.5V15 M328.9 12.5V15 M333.6 12.5V15 M338.3 0V15 M343.0 12.5V15 M347.8 12.5V15 M352.5 12.5V15 M357.2 12.5V15 M361.9 10V15 M366.7 12.5V15 M371.4 12.5V15 M376.1 12.5V15 M380.8 12.5V15 M385.6 0V15 M390.3 12.5V15 M395.0 12.5V15 M399.7 12.5V15 M404.4 12.5V15 M409.2 10V15 M413.9 12.5V15 M418.6 12.5V15 M423.3 12.5V15 M428.1 12.5V15 M432.8 0V15 M437.5 12.5V15 M442.2 12.5V15 M446.9 12.5V15 M451.7 12.5V15 M456.4 10V15 M461.1 12.5V15 M465.8 12.5V15 M470.6 12.5V15 M475.3 12.5V15 M480.0 0V15 M484.7 12.5V15 M489.4 12.5V15 M494.2 12.5V15 M498.9 12.5V15 M503.6 10V15 M508.3 12.5V15 M513.1 12.5V15 M517.8 12.5V15 M522.5 12.5V15 M527.2 0V15 M531.9 12.5V15 M536.7 12.5V15 M541.4 12.5V15 M546.1 12.5V15 M550.8 10V15 M555.6 12.5V15 M560.3 12.5V15 M565.0 12.5V15 M569.7 12.5V15 M574.5 0V15 M579.2 12.5V15 M583.9 12.5V15 M588.6 12.5V15 M593.3 12.5V15 M598.1 10V15 M602.8 12.5V15 M607.5 12.5V15 M612.2 12.5V15 M617.0 12.5V15 M621.7 0V15 M626.4 12.5V15 M631.1 12.5V15 M635.8 12.5V15 M640.6 12.5V15 M645.3 10V15 M650.0 12.5V15 M654.7 12.5V15 M659.5 12.5V15 M664.2 12.5V15 M668.9 0V15 M673.6 12.5V15 M678.3 12.5V15 M683.1 12.5V15 M687.8 12.5V15 M692.5 10V15 M697.2 12.5V15 M702.0 12.5V15 M706.7 12.5V15 M711.4 12.5V15 M716.1 0V15 M720.8 12.5V15 M725.6 12.5V15 M730.3 12.5V15 M735.0 12.5V15 M739.7 10V15 M744.5 12.5V15 M749.2 12.5V15 M753.9 12.5V15 M758.6 12.5V15 M763.4 0V15 M768.1 12.5V15 M772.8 12.5V15 M777.5 12.5V15 M782.2 12.5V15 M787.0 10V15 M791.7 12.5V15 M796.4 12.5V15 M801.1 12.5V15 M805.9 12.5V15 M810.6 0V15 M815.3 12.5V15 M820.0 12.5V15 M824.7 12.5V15 M829.5 12.5V15 M834.2 10V15 M838.9 12.5V15 M843.6 12.5V15 M848.4 12.5V15 M853.1 12.5V15 M857.8 0V15 M862.5 12.5V15 M867.2 12.5V15 M872.0 12.5V15 M876.7 12.5V15 M881.4 10V15 M886.1 12.5V15 M890.9 12.5V15 M895.6 12.5V15 M900.3 12.5V15 M905.0 0V15 M909.7 12.5V15 M914.5 12.5V15 M919.2 12.5V15 M923.9 12.5V15 M928.6 10V15 M933.4 12.5V15 M938.1 12.5V15 M942.8 12.5V15 M947.5 12.5V15 M952.2 0V15 M957.0 12.5V15 M961.7 12.5V15 M966.4 12.5V15 M971.1 12.5V15 M975.9 10V15 M980.6 12.5V15 M985.3 12.5V15 M990.0 12.5V15 M994.8 12.5V15 M999.5 0V15 M1004.2 12.5V15 M1008.9 12.5V15 M1013.6 12.5V15 M1018.4 12.5V15 M1023.1 10V15 M1027.8 12.5V15 M1032.5 12.5V15 M1037.3 12.5V15 M1042.0 12.5V15 M1046.7 0V15 M1051.4 12.5V15 M1056.1 12.5V15 M1060.9 12.5V15 M1065.6 12.5V15 M1070.3 10V15 M1075.0 12.5V15 M1079.8 12.5V15 M1084.5 12.5V15 M1089.2 12.5V15 M1093.9 0V15 M1098.6 12.5V15 M1103.4 12.5V15 M1108.1 12.5V15 M1112.8 12.5V15 M1117.5 10V15 M1122.3 12.5V15 M1127.0 12.5V15 M1131.7 12.5V15 M1136.4 12.5V15 M1141.2 0V15 M1145.9 12.5V15 M1150.6 12.5V15 M1155.3 12.5V15 M1160.0 12.5V15 M1164.8 10V15 M1169.5 12.5V15 M1174.2 12.5V15 M1178.9 12.5V15 M1183.7 12.5V15 M1188.4 0V15 M1193.1 12.5V15 M1197.8 12.5V15 M1202.5 12.5V15 M1207.3 12.5V15 M1212.0 10V15 M1216.7 12.5V15 M1221.4 12.5V15 M1226.2 12.5V15 M1230.9 12.5V15 M1235.6 0V15 M1240.3 12.5V15 M1245.0 12.5V15 M1249.8 12.5V15 M1254.5 12.5V15 M1259.2 10V15 M1263.9 12.5V15 M1268.7 12.5V15 M1273.4 12.5V15 M1278.1 12.5V15 M1282.8 0V15 M1287.5 12.5V15 M1292.3 12.5V15 M1297.0 12.5V15 M1301.7 12.5V15 M1306.4 10V15 M1311.2 12.5V15 M1315.9 12.5V15 M1320.6 12.5V15 M1325.3 12.5V15 M1330.1 0V15 M1334.8 12.5V15 M1339.5 12.5V15 M1344.2 12.5V15 M1348.9 12.5V15 M1353.7 10V15 M1358.4 12.5V15 M1363.1 12.5V15 M1367.8 12.5V15 M1372.6 12.5V15 M1377.3 0V15 M1382.0 12.5V15 M1386.7 12.5V15 M1391.4 12.5V15 M1396.2 12.5V15 M1400.9 10V15 M1405.6 12.5V15 M1410.3 12.5V15 M1415.1 12.5V15 M1419.8 12.5V15 M1424.5 0V15 M1429.2 12.5V15 M1433.9 12.5V15 M1438.7 12.5V15 M1443.4 12.5V15 M1448.1 10V15 M1452.8 12.5V15 M1457.6 12.5V15 M1462.3 12.5V15 M1467.0 12.5V15" stroke="#8c8c8c" stroke-width="1"/></svg>
<div class="t" style="left:65.2px;top:135.6px;font-size:9.8px;color:#e8e8e8;letter-spacing:-0.2px">100</div>
<div class="t" style="left:112.5px;top:135.6px;font-size:9.8px;color:#e8e8e8;letter-spacing:-0.2px">90</div>
<div class="t" style="left:159.7px;top:135.6px;font-size:9.8px;color:#e8e8e8;letter-spacing:-0.2px">80</div>
<div class="t" style="left:206.9px;top:135.6px;font-size:9.8px;color:#e8e8e8;letter-spacing:-0.2px">70</div>
<div class="t" style="left:254.1px;top:135.6px;font-size:9.8px;color:#e8e8e8;letter-spacing:-0.2px">60</div>
<div class="t" style="left:301.4px;top:135.6px;font-size:9.8px;color:#e8e8e8;letter-spacing:-0.2px">50</div>
<div class="t" style="left:348.6px;top:135.6px;font-size:9.8px;color:#e8e8e8;letter-spacing:-0.2px">40</div>
<div class="t" style="left:395.8px;top:135.6px;font-size:9.8px;color:#e8e8e8;letter-spacing:-0.2px">30</div>
<div class="t" style="left:443.1px;top:135.6px;font-size:9.8px;color:#e8e8e8;letter-spacing:-0.2px">20</div>
<div class="t" style="left:490.3px;top:135.6px;font-size:9.8px;color:#e8e8e8;letter-spacing:-0.2px">10</div>
<div class="t" style="left:537.5px;top:135.6px;font-size:9.8px;color:#e8e8e8;letter-spacing:-0.2px">0</div>
<div class="t" style="left:584.7px;top:135.6px;font-size:9.8px;color:#e8e8e8;letter-spacing:-0.2px">10</div>
<div class="t" style="left:632.0px;top:135.6px;font-size:9.8px;color:#e8e8e8;letter-spacing:-0.2px">20</div>
<div class="t" style="left:679.2px;top:135.6px;font-size:9.8px;color:#e8e8e8;letter-spacing:-0.2px">30</div>
<div class="t" style="left:726.4px;top:135.6px;font-size:9.8px;color:#e8e8e8;letter-spacing:-0.2px">40</div>
<div class="t" style="left:773.6px;top:135.6px;font-size:9.8px;color:#e8e8e8;letter-spacing:-0.2px">50</div>
<div class="t" style="left:820.9px;top:135.6px;font-size:9.8px;color:#e8e8e8;letter-spacing:-0.2px">60</div>
<div class="t" style="left:868.1px;top:135.6px;font-size:9.8px;color:#e8e8e8;letter-spacing:-0.2px">70</div>
<div class="t" style="left:915.3px;top:135.6px;font-size:9.8px;color:#e8e8e8;letter-spacing:-0.2px">80</div>
<div class="t" style="left:962.5px;top:135.6px;font-size:9.8px;color:#e8e8e8;letter-spacing:-0.2px">90</div>
<div class="t" style="left:1009.8px;top:135.6px;font-size:9.8px;color:#e8e8e8;letter-spacing:-0.2px">100</div>
<div class="t" style="left:1057.0px;top:135.6px;font-size:9.8px;color:#e8e8e8;letter-spacing:-0.2px">110</div>
<div class="t" style="left:1104.2px;top:135.6px;font-size:9.8px;color:#e8e8e8;letter-spacing:-0.2px">120</div>
<div class="t" style="left:1151.4px;top:135.6px;font-size:9.8px;color:#e8e8e8;letter-spacing:-0.2px">130</div>
<div class="t" style="left:1198.7px;top:135.6px;font-size:9.8px;color:#e8e8e8;letter-spacing:-0.2px">140</div>
<div class="t" style="left:1245.9px;top:135.6px;font-size:9.8px;color:#e8e8e8;letter-spacing:-0.2px">150</div>
<div class="t" style="left:1293.1px;top:135.6px;font-size:9.8px;color:#e8e8e8;letter-spacing:-0.2px">160</div>
<div class="t" style="left:1340.3px;top:135.6px;font-size:9.8px;color:#e8e8e8;letter-spacing:-0.2px">170</div>
<div class="t" style="left:1387.6px;top:135.6px;font-size:9.8px;color:#e8e8e8;letter-spacing:-0.2px">180</div>
<div class="t" style="left:1434.8px;top:135.6px;font-size:9.8px;color:#e8e8e8;letter-spacing:-0.2px">190</div>
<div class="t" style="left:1482.0px;top:135.6px;font-size:9.8px;color:#e8e8e8;letter-spacing:-0.2px">200</div>
<div class="a" style="left:56px;top:134px;width:15px;height:15px;background:#1e1e1e"></div>
<svg class="a" style="left:58px;top:137px;" width="14" height="12" viewBox="0 0 14 12"><path d="M0 5.5h12M6 0v12" stroke="#aaa" stroke-dasharray="1 1.2"/><circle cx="6" cy="5.5" r="1.5" fill="#1e1e1e" stroke="#aaa"/></svg>
<div class="a" style="left:71px;top:134px;width:1px;height:16px;background:#8c8c8c"></div>
<div class="a" style="left:56px;top:150px;width:15px;height:858px;overflow:hidden">
<div class="a" style="left:-0.5px;top:7.7px;width:10px;font-size:9.8px;line-height:8.7px;color:#e8e8e8;text-align:center">1<br>1<br>0</div>
<div class="a" style="left:-0.5px;top:54.9px;width:10px;font-size:9.8px;line-height:8.7px;color:#e8e8e8;text-align:center">1<br>2<br>0</div>
<div class="a" style="left:-0.5px;top:102.2px;width:10px;font-size:9.8px;line-height:8.7px;color:#e8e8e8;text-align:center">1<br>3<br>0</div>
<div class="a" style="left:-0.5px;top:149.4px;width:10px;font-size:9.8px;line-height:8.7px;color:#e8e8e8;text-align:center">1<br>4<br>0</div>
<div class="a" style="left:-0.5px;top:196.6px;width:10px;font-size:9.8px;line-height:8.7px;color:#e8e8e8;text-align:center">1<br>5<br>0</div>
<div class="a" style="left:-0.5px;top:243.8px;width:10px;font-size:9.8px;line-height:8.7px;color:#e8e8e8;text-align:center">1<br>6<br>0</div>
<div class="a" style="left:-0.5px;top:291.1px;width:10px;font-size:9.8px;line-height:8.7px;color:#e8e8e8;text-align:center">1<br>7<br>0</div>
<div class="a" style="left:-0.5px;top:338.3px;width:10px;font-size:9.8px;line-height:8.7px;color:#e8e8e8;text-align:center">1<br>8<br>0</div>
<div class="a" style="left:-0.5px;top:385.5px;width:10px;font-size:9.8px;line-height:8.7px;color:#e8e8e8;text-align:center">1<br>9<br>0</div>
<div class="a" style="left:-0.5px;top:432.7px;width:10px;font-size:9.8px;line-height:8.7px;color:#e8e8e8;text-align:center">2<br>0<br>0</div>
<div class="a" style="left:-0.5px;top:480.0px;width:10px;font-size:9.8px;line-height:8.7px;color:#e8e8e8;text-align:center">2<br>1<br>0</div>
<div class="a" style="left:-0.5px;top:527.2px;width:10px;font-size:9.8px;line-height:8.7px;color:#e8e8e8;text-align:center">2<br>2<br>0</div>
<div class="a" style="left:-0.5px;top:574.4px;width:10px;font-size:9.8px;line-height:8.7px;color:#e8e8e8;text-align:center">2<br>3<br>0</div>
<div class="a" style="left:-0.5px;top:621.6px;width:10px;font-size:9.8px;line-height:8.7px;color:#e8e8e8;text-align:center">2<br>4<br>0</div>
<div class="a" style="left:-0.5px;top:668.8px;width:10px;font-size:9.8px;line-height:8.7px;color:#e8e8e8;text-align:center">2<br>5<br>0</div>
<div class="a" style="left:-0.5px;top:716.1px;width:10px;font-size:9.8px;line-height:8.7px;color:#e8e8e8;text-align:center">2<br>6<br>0</div>
<div class="a" style="left:-0.5px;top:763.3px;width:10px;font-size:9.8px;line-height:8.7px;color:#e8e8e8;text-align:center">2<br>7<br>0</div>
<div class="a" style="left:-0.5px;top:810.5px;width:10px;font-size:9.8px;line-height:8.7px;color:#e8e8e8;text-align:center">2<br>8<br>0</div>
<div class="a" style="left:-0.5px;top:857.8px;width:10px;font-size:9.8px;line-height:8.7px;color:#e8e8e8;text-align:center">2<br>9<br>0</div>
</div>
<svg class="a" style="left:56px;top:150px;" width="15" height="858" viewBox="0 0 15 858"><path d="M12.5 2.0H15 M0 6.7H15 M12.5 11.4H15 M12.5 16.1H15 M12.5 20.9H15 M12.5 25.6H15 M10 30.3H15 M12.5 35.0H15 M12.5 39.8H15 M12.5 44.5H15 M12.5 49.2H15 M0 53.9H15 M12.5 58.6H15 M12.5 63.4H15 M12.5 68.1H15 M12.5 72.8H15 M10 77.5H15 M12.5 82.3H15 M12.5 87.0H15 M12.5 91.7H15 M12.5 96.4H15 M0 101.2H15 M12.5 105.9H15 M12.5 110.6H15 M12.5 115.3H15 M12.5 120.0H15 M10 124.8H15 M12.5 129.5H15 M12.5 134.2H15 M12.5 138.9H15 M12.5 143.7H15 M0 148.4H15 M12.5 153.1H15 M12.5 157.8H15 M12.5 162.5H15 M12.5 167.3H15 M10 172.0H15 M12.5 176.7H15 M12.5 181.4H15 M12.5 186.2H15 M12.5 190.9H15 M0 195.6H15 M12.5 200.3H15 M12.5 205.0H15 M12.5 209.8H15 M12.5 214.5H15 M10 219.2H15 M12.5 223.9H15 M12.5 228.7H15 M12.5 233.4H15 M12.5 238.1H15 M0 242.8H15 M12.5 247.5H15 M12.5 252.3H15 M12.5 257.0H15 M12.5 261.7H15 M10 266.4H15 M12.5 271.2H15 M12.5 275.9H15 M12.5 280.6H15 M12.5 285.3H15 M0 290.1H15 M12.5 294.8H15 M12.5 299.5H15 M12.5 304.2H15 M12.5 308.9H15 M10 313.7H15 M12.5 318.4H15 M12.5 323.1H15 M12.5 327.8H15 M12.5 332.6H15 M0 337.3H15 M12.5 342.0H15 M12.5 346.7H15 M12.5 351.4H15 M12.5 356.2H15 M10 360.9H15 M12.5 365.6H15 M12.5 370.3H15 M12.5 375.1H15 M12.5 379.8H15 M0 384.5H15 M12.5 389.2H15 M12.5 393.9H15 M12.5 398.7H15 M12.5 403.4H15 M10 408.1H15 M12.5 412.8H15 M12.5 417.6H15 M12.5 422.3H15 M12.5 427.0H15 M0 431.7H15 M12.5 436.4H15 M12.5 441.2H15 M12.5 445.9H15 M12.5 450.6H15 M10 455.3H15 M12.5 460.1H15 M12.5 464.8H15 M12.5 469.5H15 M12.5 474.2H15 M0 479.0H15 M12.5 483.7H15 M12.5 488.4H15 M12.5 493.1H15 M12.5 497.8H15 M10 502.6H15 M12.5 507.3H15 M12.5 512.0H15 M12.5 516.7H15 M12.5 521.5H15 M0 526.2H15 M12.5 530.9H15 M12.5 535.6H15 M12.5 540.3H15 M12.5 545.1H15 M10 549.8H15 M12.5 554.5H15 M12.5 559.2H15 M12.5 564.0H15 M12.5 568.7H15 M0 573.4H15 M12.5 578.1H15 M12.5 582.8H15 M12.5 587.6H15 M12.5 592.3H15 M10 597.0H15 M12.5 601.7H15 M12.5 606.5H15 M12.5 611.2H15 M12.5 615.9H15 M0 620.6H15 M12.5 625.3H15 M12.5 630.1H15 M12.5 634.8H15 M12.5 639.5H15 M10 644.2H15 M12.5 649.0H15 M12.5 653.7H15 M12.5 658.4H15 M12.5 663.1H15 M0 667.8H15 M12.5 672.6H15 M12.5 677.3H15 M12.5 682.0H15 M12.5 686.7H15 M10 691.5H15 M12.5 696.2H15 M12.5 700.9H15 M12.5 705.6H15 M12.5 710.4H15 M0 715.1H15 M12.5 719.8H15 M12.5 724.5H15 M12.5 729.2H15 M12.5 734.0H15 M10 738.7H15 M12.5 743.4H15 M12.5 748.1H15 M12.5 752.9H15 M12.5 757.6H15 M0 762.3H15 M12.5 767.0H15 M12.5 771.7H15 M12.5 776.5H15 M12.5 781.2H15 M10 785.9H15 M12.5 790.6H15 M12.5 795.4H15 M12.5 800.1H15 M12.5 804.8H15 M0 809.5H15 M12.5 814.2H15 M12.5 819.0H15 M12.5 823.7H15 M12.5 828.4H15 M10 833.1H15 M12.5 837.9H15 M12.5 842.6H15 M12.5 847.3H15 M12.5 852.0H15 M0 856.8H15" stroke="#8c8c8c" stroke-width="1"/></svg>
<div class="a" style="left:1526px;top:134px;width:16px;height:874px;background:#4a4a4a"></div>
<svg class="a" style="left:1529px;top:139px;" width="10" height="6" viewBox="0 0 10 6"><path d="M1 5l4-4 4 4" fill="none" stroke="#888" stroke-width="1.1"/></svg>
<div class="a" style="left:1528px;top:316px;width:12px;height:211px;background:#676767;border-radius:6px"></div>
<svg class="a" style="left:1529px;top:997px;" width="10" height="6" viewBox="0 0 10 6"><path d="M1 1l4 4 4-4" fill="none" stroke="#888" stroke-width="1.1"/></svg>
<div class="a" style="left:56px;top:1008px;width:1486px;height:17px;background:#535353"></div>
<div class="a" style="left:505px;top:1008px;width:1021px;height:17px;background:#4a4a4a"></div>
<div class="a" style="left:694px;top:1010px;width:470px;height:14px;background:#656565;border-radius:7px"></div>
<svg class="a" style="left:510px;top:1012px;" width="6" height="10" viewBox="0 0 6 10"><path d="M5 1L1 5l4 4" fill="none" stroke="#888" stroke-width="1.1"/></svg>
<svg class="a" style="left:1492px;top:1012px;" width="6" height="10" viewBox="0 0 6 10"><path d="M1 1l4 4-4 4" fill="none" stroke="#888" stroke-width="1.1"/></svg>
<div class="a" style="left:1503px;top:1008px;width:23px;height:17px;background:#4f4f4f"></div>
<div class="a" style="left:1508px;top:1011px;width:17px;height:12px;border:1.5px solid #c4c4c4"></div>
<div class="a" style="left:1516px;top:1011px;width:1.5px;height:12px;background:#c4c4c4"></div>
<svg class="a" style="left:1529px;top:1012px;" width="11" height="11" viewBox="0 0 11 11"><path d="M10 2v1M8 4v1M10 4v1M6 6v1M8 6v1M10 6v1M4 8v1M6 8v1M8 8v1M10 8v1" stroke="#777"/></svg>
<svg class="a" style="left:67px;top:1012px;" width="10" height="11" viewBox="0 0 10 11"><path d="M1 1v9" stroke="#9a9a9a" stroke-width="2"/><path d="M9 1v9L3 5.5z" fill="#9a9a9a"/></svg>
<svg class="a" style="left:89px;top:1012px;" width="7" height="11" viewBox="0 0 7 11"><path d="M6 1v9L1 5.5z" fill="#9a9a9a"/></svg>
<div class="a" style="left:107px;top:1009px;width:91px;height:15px;background:#454545;border:1px solid #6a6a6a;border-radius:3px"></div>
<div class="a" style="left:178px;top:1010px;width:1px;height:13px;background:#6a6a6a"></div>
<div class="t" style="left:111px;top:1011.69px;font-size:11px;color:#e8e8e8;">1</div>
<svg class="a" style="left:183px;top:1014px;" width="10" height="6" viewBox="0 0 10 6"><path d="M1 1 L5.0 5 L9 1" fill="none" stroke="#cfcfcf" stroke-width="1.3"/></svg>
<svg class="a" style="left:210px;top:1012px;" width="7" height="11" viewBox="0 0 7 11"><path d="M1 1v9l5-4.5z" fill="#c8c8c8"/></svg>
<svg class="a" style="left:228px;top:1012px;" width="11" height="11" viewBox="0 0 11 11"><path d="M1 1v9l6-4.5z" fill="#c8c8c8"/><path d="M9 1v9" stroke="#c8c8c8" stroke-width="2"/></svg>
<svg class="a" style="left:254px;top:1010px;" width="15" height="14" viewBox="0 0 15 14"><path d="M2 12V7a5 5 0 0 1 10 0v1" fill="none" stroke="#bdbdbd" stroke-width="2.5"/><path d="M7 4v3h3" fill="none" stroke="#bdbdbd"/><path d="M11 12h3l-1.5 2z" fill="#bdbdbd"/></svg>
<div class="t" style="left:287px;top:1011.86px;font-size:10.8px;color:#e0e0e0;letter-spacing:-0.175px;">[Basic] (working)</div>
<svg class="a" style="left:388px;top:1015px;" width="10" height="6" viewBox="0 0 10 6"><path d="M1 1 L5.0 5 L9 1" fill="none" stroke="#cfcfcf" stroke-width="1.3"/></svg>
<div class="a" style="left:413px;top:1011px;width:11px;height:11px;background:#3fae49;border-radius:50%"></div>
<div class="t" style="left:429px;top:1011.86px;font-size:10.8px;color:#e0e0e0;letter-spacing:-0.375px;">No errors</div>
<svg class="a" style="left:491px;top:1015px;" width="10" height="6" viewBox="0 0 10 6"><path d="M1 1 L5.0 5 L9 1" fill="none" stroke="#cfcfcf" stroke-width="1.3"/></svg>
<div class="a" style="left:595px;top:150px;width:1px;height:830px;background:#a040ff"></div>
<div class="a" style="left:1468px;top:150px;width:1px;height:830px;background:#a040ff"></div>
<div class="a" style="left:595px;top:979px;width:874px;height:1px;background:#ff55ff"></div>
<div class="a" style="left:609px;top:150px;width:1px;height:858px;background:#00f0ff"></div>
<div class="a" style="left:1014px;top:150px;width:1px;height:858px;background:#00f0ff"></div>
<div class="a" style="left:1418px;top:150px;width:1px;height:858px;background:#00f0ff"></div>
<div class="a" style="left:1459px;top:150px;width:1px;height:858px;background:#00f0ff"></div>
<div class="a" style="left:610px;top:209px;width:808px;height:1px;background:#4d94ff"></div>
<div class="a" style="left:610px;top:268px;width:808px;height:1px;background:#4d94ff"></div>
<div class="a" style="left:610px;top:312px;width:808px;height:1px;background:#4d94ff"></div>
<div class="a" style="left:610px;top:155px;width:403px;height:1px;background:#4d94ff"></div>
<div class="a" style="left:610px;top:169px;width:403px;height:1px;background:#4d94ff"></div>
<div class="a" style="left:1015px;top:156px;width:403px;height:1px;background:#4d94ff"></div>
<div class="a" style="left:1015px;top:170px;width:403px;height:1px;background:#4d94ff"></div>
<div class="a" style="left:610px;top:183px;width:808px;height:1px;background:#777"></div>
<div class="a" style="left:1013px;top:150px;width:1px;height:59px;background:#a39a9a"></div>
<div class="a" style="left:1013px;top:209px;width:1px;height:59px;background:#3a4d7e"></div>
<div class="a" style="left:1013px;top:268px;width:1px;height:44px;background:#4d94ff"></div>
<div class="a" style="left:1417px;top:150px;width:1px;height:162px;background:#4d94ff"></div>
<div class="t" style="left:610px;width:404px;text-align:center;top:150px;height:20px;overflow:hidden"><div style="position:relative;top:3.8px;font-size:19.5px;color:#2a2a2a;letter-spacing:-0.6px;line-height:1">Tier 1: R0 - R50 000</div></div>
<div class="t" style="left:1014px;width:404px;text-align:center;top:157px;height:13px;overflow:hidden"><div style="position:relative;top:-3.2px;font-size:19.5px;color:#2a2a2a;letter-spacing:-0.6px;line-height:1">Tier 2: R50 000+</div></div>
<div class="a" style="left:610px;top:210px;width:806px;height:58px;overflow:hidden">
<div class="t" style="left:-196.5px;width:800px;text-align:center;top:-6.86px;font-size:48.5px;color:#111;letter-spacing:-3.6px;-webkit-text-stroke:1.1px #111">10%</div>
<div class="t" style="left:209.5px;width:800px;text-align:center;top:-6.86px;font-size:48.5px;color:#111;letter-spacing:-3.6px;-webkit-text-stroke:1.1px #111">15%</div>
</div>
<div class="a" style="left:604px;top:352px;width:810px;height:507px;border:1px solid #4d94ff"></div>
<div class="t" style="left:604px;top:352.11px;font-size:17px;color:#333;letter-spacing:1.658px">*Please note:</div>
<div class="t" style="left:604px;top:398.94px;font-size:14.6px;color:#333;font-style:italic;letter-spacing:0.738px">The Decorator’s Discount is not valid on sale or discounted products;</div>
<div class="t" style="left:604px;top:443.94px;font-size:14.6px;color:#333;font-style:italic;letter-spacing:0.650px">Loads of Living and/or Truworths Limited reserves the right to exclude items from the Decorator’s Discount at their</div>
<div class="t" style="left:604px;top:465.94px;font-size:14.6px;color:#333;font-style:italic;letter-spacing:0.739px">sole discretion without prior notice to members; Accrual of annual purchases is exclusive of returns;</div>
<div class="t" style="left:604px;top:510.94px;font-size:14.6px;color:#333;font-style:italic;letter-spacing:1.239px">Membership to the Program may only be issued to a verified Interior Decorator or Designer, and obtaining</div>
<div class="t" style="left:604px;top:532.94px;font-size:14.6px;color:#333;font-style:italic;letter-spacing:0.661px">membership is purely at the discretion of Truworths Limited;</div>
<div class="t" style="left:604px;top:622.94px;font-size:14.6px;color:#333;font-style:italic;letter-spacing:0.821px">Each Decorator or Designer must individually apply for membership to the Program. The discount is for the sole</div>
<div class="t" style="left:604px;top:644.94px;font-size:14.6px;color:#333;font-style:italic;letter-spacing:1.131px">benefit of the member and is not transferable. Discounts may only be redeemed in person by members with</div>
<div class="t" style="left:604px;top:666.94px;font-size:14.6px;color:#333;font-style:italic;letter-spacing:0.796px">positive identification;</div>
<div class="t" style="left:604px;top:711.94px;font-size:14.6px;color:#333;font-style:italic;letter-spacing:0.974px">Loads of Living and/or Truworths Limited reserves the right to make all membership determinations at its sole</div>
<div class="t" style="left:604px;top:733.94px;font-size:14.6px;color:#333;font-style:italic;letter-spacing:0.700px">discretion;</div>
<div class="t" style="left:604px;top:778.94px;font-size:14.6px;color:#333;font-style:italic;letter-spacing:0.841px">Membership to the Program may be revoked by Loads of Living and/or Truworths Limited at any time;</div>
<div class="t" style="left:604px;top:823.94px;font-size:14.6px;color:#333;font-style:italic;letter-spacing:1.018px">Membership and all purchases are subject to the Truworths Terms and Conditions for the Application for, and</div>
<div class="t" style="left:604px;top:845.94px;font-size:14.6px;color:#333;font-style:italic;letter-spacing:0.903px">Granting of Credit, and Sale, as amended from time to time.</div>
<div class="t" style="left:870px;top:577.94px;font-size:14.6px;color:#333;letter-spacing:0.665px;font-style:italic;">including retail businesses and professions may not qualify for the Program;</div>
<div class="a" style="left:595px;top:878px;width:816px;height:102px;border:1px solid #4d94ff;border-bottom:none;border-left:none"></div>
<div class="a" style="left:595px;top:954px;width:873px;height:1px;background:#4d94ff"></div>
<div class="t" style="left:597px;top:878.34px;font-size:18.5px;color:#333;letter-spacing:1.071px">Documents Required</div>
<div class="a" style="left:599px;top:916px;width:6.5px;height:6.5px;background:#111;border-radius:50%"></div>
<div class="a" style="left:599px;top:948px;width:6.5px;height:6.5px;background:#111;border-radius:50%"></div>
<div class="t" style="left:657px;top:911.34px;font-size:18.5px;color:#333;letter-spacing:1.018px">Copy of ID document/Drivers License</div>
<div class="t" style="left:657px;top:943.34px;font-size:18.5px;color:#333;letter-spacing:0.142px">Business Card</div>
<div class="a" style="left:1542px;top:104px;width:2px;height:921px;background:#3a3a3a"></div>
<div class="a" style="left:1544px;top:104px;width:361px;height:13px;background:#424242"></div>
<svg class="a" style="left:1645px;top:107px;" width="10" height="7" viewBox="0 0 10 7"><path d="M4 0L0.5 3.5 4 7zM9 0L5.5 3.5 9 7z" fill="#cfcfcf"/></svg>
<svg class="a" style="left:1892px;top:107px;" width="10" height="7" viewBox="0 0 10 7"><path d="M0 0l3.5 3.5L0 7zM5 0l3.5 3.5L5 7z" fill="#cfcfcf"/></svg>
<div class="a" style="left:1544px;top:117px;width:118px;height:908px;background:#535353"></div>
<div class="a" style="left:1662px;top:117px;width:3px;height:908px;background:#3a3a3a"></div>
<div class="a" style="left:1544px;top:213px;width:118px;height:1px;background:#3c3c3c"></div>
<div class="a" style="left:1544px;top:282px;width:118px;height:1px;background:#3c3c3c"></div>
<div class="a" style="left:1544px;top:322px;width:118px;height:1px;background:#3c3c3c"></div>
<div class="a" style="left:1593px;top:120px;width:1px;height:4px;background:#3b3b3b"></div>
<div class="a" style="left:1595px;top:120px;width:1px;height:4px;background:#3b3b3b"></div>
<div class="a" style="left:1597px;top:120px;width:1px;height:4px;background:#3b3b3b"></div>
<div class="a" style="left:1599px;top:120px;width:1px;height:4px;background:#3b3b3b"></div>
<div class="a" style="left:1601px;top:120px;width:1px;height:4px;background:#3b3b3b"></div>
<div class="a" style="left:1603px;top:120px;width:1px;height:4px;background:#3b3b3b"></div>
<div class="a" style="left:1605px;top:120px;width:1px;height:4px;background:#3b3b3b"></div>
<div class="a" style="left:1607px;top:120px;width:1px;height:4px;background:#3b3b3b"></div>
<div class="a" style="left:1609px;top:120px;width:1px;height:4px;background:#3b3b3b"></div>
<div class="a" style="left:1611px;top:120px;width:1px;height:4px;background:#3b3b3b"></div>
<div class="a" style="left:1593px;top:216px;width:1px;height:4px;background:#3b3b3b"></div>
<div class="a" style="left:1595px;top:216px;width:1px;height:4px;background:#3b3b3b"></div>
<div class="a" style="left:1597px;top:216px;width:1px;height:4px;background:#3b3b3b"></div>
<div class="a" style="left:1599px;top:216px;width:1px;height:4px;background:#3b3b3b"></div>
<div class="a" style="left:1601px;top:216px;width:1px;height:4px;background:#3b3b3b"></div>
<div class="a" style="left:1603px;top:216px;width:1px;height:4px;background:#3b3b3b"></div>
<div class="a" style="left:1605px;top:216px;width:1px;height:4px;background:#3b3b3b"></div>
<div class="a" style="left:1607px;top:216px;width:1px;height:4px;background:#3b3b3b"></div>
<div class="a" style="left:1609px;top:216px;width:1px;height:4px;background:#3b3b3b"></div>
<div class="a" style="left:1611px;top:216px;width:1px;height:4px;background:#3b3b3b"></div>
<div class="a" style="left:1593px;top:285px;width:1px;height:4px;background:#3b3b3b"></div>
<div class="a" style="left:1595px;top:285px;width:1px;height:4px;background:#3b3b3b"></div>
<div class="a" style="left:1597px;top:285px;width:1px;height:4px;background:#3b3b3b"></div>
<div class="a" style="left:1599px;top:285px;width:1px;height:4px;background:#3b3b3b"></div>
<div class="a" style="left:1601px;top:285px;width:1px;height:4px;background:#3b3b3b"></div>
<div class="a" style="left:1603px;top:285px;width:1px;height:4px;background:#3b3b3b"></div>
<div class="a" style="left:1605px;top:285px;width:1px;height:4px;background:#3b3b3b"></div>
<div class="a" style="left:1607px;top:285px;width:1px;height:4px;background:#3b3b3b"></div>
<div class="a" style="left:1609px;top:285px;width:1px;height:4px;background:#3b3b3b"></div>
<div class="a" style="left:1611px;top:285px;width:1px;height:4px;background:#3b3b3b"></div>
<svg class="a" style="left:1555px;top:131px;" width="18" height="18" viewBox="0 0 18 18"><path d="M1 4l7-3v15l-7 1zM17 4l-7-3v15l7 1z" fill="#cdcdcd"/><path d="M9 0v18" stroke="#cdcdcd" stroke-width="0.8"/></svg>
<div class="t" style="left:1581px;top:136.27px;font-size:11.5px;color:#eaeaea;letter-spacing:-0.723px;font-weight:bold;">Pages</div>
<svg class="a" style="left:1555px;top:160px;" width="18" height="18" viewBox="0 0 18 18"><path d="M9 1l8 4.5-8 4.5-8-4.5z" fill="#cdcdcd"/><path d="M1 9.5l8 4.5 8-4.5v2.5l-8 4.5-8-4.5z" fill="#cdcdcd"/></svg>
<div class="t" style="left:1581px;top:164.27px;font-size:11.5px;color:#eaeaea;letter-spacing:-0.819px;font-weight:bold;">Layers</div>
<svg class="a" style="left:1554px;top:191px;" width="20" height="10" viewBox="0 0 20 10"><rect x="1" y="1" width="11" height="8" rx="4" fill="none" stroke="#cdcdcd" stroke-width="2"/><rect x="8" y="1" width="11" height="8" rx="4" fill="none" stroke="#cdcdcd" stroke-width="2"/></svg>
<div class="t" style="left:1581px;top:192.27px;font-size:11.5px;color:#eaeaea;letter-spacing:-0.762px;font-weight:bold;">Links</div>
<svg class="a" style="left:1555px;top:231px;" width="18" height="14" viewBox="0 0 18 14"><path d="M0 1.5h17M0 6.5h17M0 12h17" stroke="#cdcdcd" stroke-width="2.2"/></svg>
<div class="t" style="left:1581px;top:233.27px;font-size:11.5px;color:#eaeaea;letter-spacing:-0.559px;font-weight:bold;">Stroke</div>
<svg class="a" style="left:1554px;top:258px;" width="20" height="16" viewBox="0 0 20 16"><path d="M10 1c6 0 9 3 9 6s-2 3-4 3-2 2-1 3-1 2-5 2C4 15 1 12 1 8s4-7 9-7z" fill="#cdcdcd"/><circle cx="5" cy="10" r="1.4" fill="#535353"/><circle cx="8" cy="12" r="1.4" fill="#535353"/><circle cx="12" cy="5" r="1.4" fill="#535353"/><circle cx="15" cy="7" r="1.3" fill="#535353"/></svg>
<div class="t" style="left:1581px;top:261.27px;font-size:11.5px;color:#eaeaea;letter-spacing:-0.258px;font-weight:bold;">Color</div>
<svg class="a" style="left:1555px;top:301px;" width="15" height="12" viewBox="0 0 15 12"><rect x="0.5" y="0.5" width="14" height="11" fill="none" stroke="#cdcdcd"/><rect x="2" y="2" width="3.5" height="3.5" fill="#8a8a8a"/><rect x="6" y="2" width="3.5" height="3.5" fill="#8a8a8a"/><rect x="10" y="2" width="3" height="3.5" fill="#bbb"/><rect x="2" y="6.5" width="3.5" height="3.5" fill="#bbb"/><rect x="6" y="6.5" width="3.5" height="3.5" fill="#8a8a8a"/><rect x="10" y="6.5" width="3" height="3.5" fill="#bbb"/></svg>
<div class="t" style="left:1581px;top:302.27px;font-size:11.5px;color:#eaeaea;letter-spacing:-0.723px;font-weight:bold;">Swatches</div>
<div class="a" style="left:1665px;top:117px;width:240px;height:908px;background:#4b4b4b"></div>
<div class="a" style="left:1665px;top:117px;width:240px;height:27px;background:#424242"></div>
<div class="a" style="left:1665px;top:117px;width:91px;height:27px;background:#535353"></div>
<svg class="a" style="left:1673px;top:125px;" width="6" height="11" viewBox="0 0 6 11"><path d="M0.5 4L3 1l2.5 3M0.5 7L3 10l2.5-3" fill="none" stroke="#cfcfcf" stroke-width="1.1"/></svg>
<div class="t" style="left:1683px;top:125.27px;font-size:11.5px;color:#f0f0f0;letter-spacing:-0.672px;font-weight:bold;">CC Libraries</div>
<svg class="a" style="left:1889px;top:127px;" width="11" height="8" viewBox="0 0 11 8"><path d="M0 0.5h11M0 2.5h11M0 4.5h11M0 6.5h11" stroke="#cfcfcf" stroke-width="1"/></svg>
<div class="a" style="left:1665px;top:144px;width:240px;height:63px;background:#535353"></div>
<div class="a" style="left:1674px;top:152px;width:166px;height:19px;background:#4d4d4d;border:1px solid #5c5c5c;border-radius:3px"></div>
<svg class="a" style="left:1827px;top:159px;" width="10" height="6" viewBox="0 0 10 6"><path d="M1 1 L5.0 5 L9 1" fill="none" stroke="#999" stroke-width="1.3"/></svg>
<div class="a" style="left:1849px;top:151px;width:22px;height:22px;background:#353535;border-radius:3px"></div>
<svg class="a" style="left:1854px;top:156px;" width="12" height="11" viewBox="0 0 12 11"><rect x="0" y="0" width="5.5" height="5" fill="#e6e6e6"/><rect x="6.5" y="0" width="5.5" height="5" fill="#e6e6e6"/><rect x="0" y="6" width="5.5" height="5" fill="#e6e6e6"/><rect x="6.5" y="6" width="5.5" height="5" fill="#e6e6e6"/></svg>
<svg class="a" style="left:1878px;top:156px;" width="12" height="11" viewBox="0 0 12 11"><path d="M0 1h12M0 4h12M0 7h12M0 10h12" stroke="#e6e6e6" stroke-width="1.6"/></svg>
<svg class="a" style="left:1673px;top:185px;" width="11" height="11" viewBox="0 0 11 11"><circle cx="6.5" cy="4.5" r="3.3" fill="none" stroke="#bbb" stroke-width="1.5"/><path d="M4 7l-3 3" stroke="#bbb" stroke-width="2"/></svg>
<div class="t" style="left:1688px;top:185.69px;font-size:11px;color:#6d6d6d;letter-spacing:-0.405px;font-style:italic;">Search Adobe Stock</div>
<svg class="a" style="left:1885px;top:188px;" width="10" height="6" viewBox="0 0 10 6"><path d="M1 1 L5.0 5 L9 1" fill="none" stroke="#777" stroke-width="1.3"/></svg>
<div class="a" style="left:1673px;top:200px;width:224px;height:1px;background:#5d5d5d"></div>
<svg class="a" style="left:1759px;top:551.5px;" width="52" height="40" viewBox="0 0 52 40"><g fill="#707070"><circle cx="15" cy="24" r="13"/><circle cx="33" cy="20" r="15"/><rect x="15" y="24" width="22" height="13"/></g><g fill="none" stroke="#4b4b4b" stroke-width="3"><path d="M23 20A8.5 8.5 0 1 0 21 33"/><path d="M17 19c5 5 9 11 13 14 4 3 9 2 12 -3"/><path d="M27 15A9 9 0 0 1 43 23"/></g><path d="M35 27l13 13M48 27L35 40" stroke="#4b4b4b" stroke-width="6"/><path d="M36 28l11 11M47 28L36 39" stroke="#707070" stroke-width="3.2"/></svg>
<div class="t" style="left:1702.5px;top:601.69px;font-size:11px;color:#bdbdbd;letter-spacing:0.073px;">Something went wrong initializing</div>
<div class="t" style="left:1727.5px;top:616.69px;font-size:11px;color:#bdbdbd;letter-spacing:-0.130px;">Creative Cloud Libraries</div>
<div class="t" style="left:1734.5px;top:646.84px;font-size:12px;color:#3d8ef0;letter-spacing:0.167px;font-weight:bold;text-decoration:underline">More information</div>
<div class="a" style="left:1665px;top:1001px;width:240px;height:24px;background:#535353;border-top:1px solid #454545"></div>
<div class="t" style="left:1821px;top:1008.11px;font-size:10.5px;color:#e0e0e0;">-- KB</div>
<svg class="a" style="left:1845px;top:1006px;" width="18" height="15" viewBox="0 0 18 15"><g transform="scale(0.34)"><g fill="#d8d8d8"><circle cx="15" cy="24" r="13"/><circle cx="33" cy="20" r="15"/><rect x="15" y="24" width="22" height="13"/></g><g fill="none" stroke="#535353" stroke-width="4"><path d="M23 20A8.5 8.5 0 1 0 21 33"/><path d="M17 19c5 5 9 11 13 14 4 3 9 2 12 -3"/><path d="M27 15A9 9 0 0 1 43 23"/></g><path d="M35 27l13 13M48 27L35 40" stroke="#535353" stroke-width="8"/><path d="M36 28l11 11M47 28L36 39" stroke="#d8d8d8" stroke-width="4"/></g></svg>
<svg class="a" style="left:1872px;top:1007px;" width="12" height="14" viewBox="0 0 12 14"><path d="M0 2h12M4 2V0.5h4V2M1.5 3.5h9L10 14H2z" fill="#8a8a8a" stroke="#8a8a8a"/><path d="M4 5v8M6 5v8M8 5v8" stroke="#5a5a5a"/></svg>
<div class="a" style="left:181px;top:40px;width:326px;height:701px;background:rgba(0,0,0,.35);filter:blur(2px)"></div>
<div class="a" style="left:178px;top:37px;width:326px;height:701px;background:#f0f0f0;border:1px solid #979797"></div>
<div class="a" style="left:207px;top:39px;width:1px;height:697px;background:#e2e2e2"></div>
<div class="a" style="left:208px;top:39px;width:1px;height:697px;background:#ffffff"></div>
<div class="t" style="left:213px;top:45.14px;font-size:12px;color:#111;">Add Fonts from Typekit...</div>
<div class="t" style="left:213px;top:67.14px;font-size:12px;color:#111;">Font</div>
<svg class="a" style="left:488px;top:68px;" width="5" height="8" viewBox="0 0 5 8"><path d="M0 0l4.5 4L0 8z" fill="#111"/></svg>
<div class="t" style="left:213px;top:89.14px;font-size:12px;color:#111;">Size</div>
<svg class="a" style="left:488px;top:90px;" width="5" height="8" viewBox="0 0 5 8"><path d="M0 0l4.5 4L0 8z" fill="#111"/></svg>
<div class="a" style="left:209px;top:110px;width:293px;height:1px;background:#e0e0e0"></div>
<div class="a" style="left:209px;top:111px;width:293px;height:1px;background:#ffffff"></div>
<div class="t" style="left:213px;top:119.14px;font-size:12px;color:#111;">Character</div>
<div class="t" style="right:1437px;top:119.14px;font-size:12px;color:#111;">Ctrl+T</div>
<div class="t" style="left:213px;top:141.14px;font-size:12px;color:#111;">Paragraph</div>
<div class="t" style="right:1437px;top:141.14px;font-size:12px;color:#111;">Ctrl+Alt+T</div>
<div class="t" style="left:213px;top:163.14px;font-size:12px;color:#111;">Tabs</div>
<div class="t" style="right:1437px;top:163.14px;font-size:12px;color:#111;">Ctrl+Shift+T</div>
<div class="t" style="left:213px;top:185.14px;font-size:12px;color:#111;">Glyphs</div>
<div class="t" style="right:1437px;top:185.14px;font-size:12px;color:#111;">Alt+Shift+F11</div>
<div class="t" style="left:213px;top:207.14px;font-size:12px;color:#111;">Story</div>
<div class="a" style="left:209px;top:228px;width:293px;height:1px;background:#e0e0e0"></div>
<div class="a" style="left:209px;top:229px;width:293px;height:1px;background:#ffffff"></div>
<div class="t" style="left:213px;top:237.14px;font-size:12px;color:#111;">Character Styles</div>
<div class="t" style="right:1437px;top:237.14px;font-size:12px;color:#111;">Shift+F11</div>
<div class="t" style="left:213px;top:259.14px;font-size:12px;color:#111;">Paragraph Styles</div>
<div class="t" style="right:1437px;top:259.14px;font-size:12px;color:#111;">F11</div>
<div class="a" style="left:209px;top:280px;width:293px;height:1px;background:#e0e0e0"></div>
<div class="a" style="left:209px;top:281px;width:293px;height:1px;background:#ffffff"></div>
<div class="t" style="left:213px;top:289.14px;font-size:12px;color:#7f7f7f;">Create Outlines</div>
<div class="t" style="right:1437px;top:289.14px;font-size:12px;color:#7f7f7f;">Ctrl+Shift+O</div>
<div class="t" style="left:213px;top:311.14px;font-size:12px;color:#111;">Find Font...</div>
<div class="t" style="left:213px;top:333.14px;font-size:12px;color:#111;">Change Case</div>
<svg class="a" style="left:488px;top:334px;" width="5" height="8" viewBox="0 0 5 8"><path d="M0 0l4.5 4L0 8z" fill="#111"/></svg>
<div class="a" style="left:209px;top:354px;width:293px;height:1px;background:#e0e0e0"></div>
<div class="a" style="left:209px;top:355px;width:293px;height:1px;background:#ffffff"></div>
<div class="t" style="left:213px;top:363.14px;font-size:12px;color:#111;">Type on a Path</div>
<svg class="a" style="left:488px;top:364px;" width="5" height="8" viewBox="0 0 5 8"><path d="M0 0l4.5 4L0 8z" fill="#111"/></svg>
<div class="a" style="left:209px;top:384px;width:293px;height:1px;background:#e0e0e0"></div>
<div class="a" style="left:209px;top:385px;width:293px;height:1px;background:#ffffff"></div>
<div class="t" style="left:213px;top:393.14px;font-size:12px;color:#111;">Notes</div>
<svg class="a" style="left:488px;top:394px;" width="5" height="8" viewBox="0 0 5 8"><path d="M0 0l4.5 4L0 8z" fill="#111"/></svg>
<div class="t" style="left:213px;top:415.14px;font-size:12px;color:#111;">Track Changes</div>
<svg class="a" style="left:488px;top:416px;" width="5" height="8" viewBox="0 0 5 8"><path d="M0 0l4.5 4L0 8z" fill="#111"/></svg>
<div class="a" style="left:209px;top:436px;width:293px;height:1px;background:#e0e0e0"></div>
<div class="a" style="left:209px;top:437px;width:293px;height:1px;background:#ffffff"></div>
<div class="t" style="left:213px;top:445.14px;font-size:12px;color:#7f7f7f;">Insert Footnote</div>
<div class="t" style="left:213px;top:467.14px;font-size:12px;color:#111;">Document Footnote Options...</div>
<div class="t" style="left:213px;top:489.14px;font-size:12px;color:#7f7f7f;">Insert Endnote</div>
<div class="t" style="left:213px;top:511.14px;font-size:12px;color:#111;">Document Endnote Options...</div>
<div class="a" style="left:209px;top:532px;width:293px;height:1px;background:#e0e0e0"></div>
<div class="a" style="left:209px;top:533px;width:293px;height:1px;background:#ffffff"></div>
<div class="t" style="left:213px;top:541.14px;font-size:12px;color:#111;">Hyperlinks &amp; Cross-References</div>
<svg class="a" style="left:488px;top:542px;" width="5" height="8" viewBox="0 0 5 8"><path d="M0 0l4.5 4L0 8z" fill="#111"/></svg>
<div class="a" style="left:181px;top:558px;width:321px;height:22px;border:1px solid #aedbfb;border-radius:3px;background:linear-gradient(#f4f8fc,#e5eef8)"></div>
<div class="t" style="left:213px;top:563.14px;font-size:12px;color:#111;">Text Variables</div>
<svg class="a" style="left:488px;top:564px;" width="5" height="8" viewBox="0 0 5 8"><path d="M0 0l4.5 4L0 8z" fill="#111"/></svg>
<div class="a" style="left:209px;top:584px;width:293px;height:1px;background:#e0e0e0"></div>
<div class="a" style="left:209px;top:585px;width:293px;height:1px;background:#ffffff"></div>
<div class="t" style="left:213px;top:593.14px;font-size:12px;color:#111;">Bulleted &amp; Numbered Lists</div>
<svg class="a" style="left:488px;top:594px;" width="5" height="8" viewBox="0 0 5 8"><path d="M0 0l4.5 4L0 8z" fill="#111"/></svg>
<div class="a" style="left:209px;top:614px;width:293px;height:1px;background:#e0e0e0"></div>
<div class="a" style="left:209px;top:615px;width:293px;height:1px;background:#ffffff"></div>
<div class="t" style="left:213px;top:623.14px;font-size:12px;color:#111;">Insert Special Character</div>
<svg class="a" style="left:488px;top:624px;" width="5" height="8" viewBox="0 0 5 8"><path d="M0 0l4.5 4L0 8z" fill="#111"/></svg>
<div class="t" style="left:213px;top:645.14px;font-size:12px;color:#111;">Insert White Space</div>
<svg class="a" style="left:488px;top:646px;" width="5" height="8" viewBox="0 0 5 8"><path d="M0 0l4.5 4L0 8z" fill="#111"/></svg>
<div class="t" style="left:213px;top:667.14px;font-size:12px;color:#111;">Insert Break Character</div>
<svg class="a" style="left:488px;top:668px;" width="5" height="8" viewBox="0 0 5 8"><path d="M0 0l4.5 4L0 8z" fill="#111"/></svg>
<div class="t" style="left:213px;top:689.14px;font-size:12px;color:#7f7f7f;">Fill with Placeholder Text</div>
<div class="a" style="left:209px;top:710px;width:293px;height:1px;background:#e0e0e0"></div>
<div class="a" style="left:209px;top:711px;width:293px;height:1px;background:#ffffff"></div>
<div class="t" style="left:213px;top:719.14px;font-size:12px;color:#111;">Show Hidden Characters</div>
<div class="t" style="right:1437px;top:719.14px;font-size:12px;color:#111;">Ctrl+Alt+I</div>
<div class="a" style="left:501px;top:558px;width:216px;height:72px;background:rgba(0,0,0,.35);filter:blur(2px)"></div>
<div class="a" style="left:498px;top:555px;width:216px;height:72px;background:#f0f0f0;border:1px solid #979797"></div>
<div class="a" style="left:527px;top:557px;width:1px;height:68px;background:#e2e2e2"></div>
<div class="a" style="left:528px;top:557px;width:1px;height:68px;background:#fff"></div>
<div class="a" style="left:501px;top:580px;width:211px;height:22px;border:1px solid #aedbfb;border-radius:3px;background:linear-gradient(#f4f8fc,#e5eef8)"></div>
<div class="t" style="left:533px;top:562.84px;font-size:12px;color:#111;">Define...</div>
<div class="t" style="left:533px;top:584.84px;font-size:12px;color:#111;">Insert Variable</div>
<svg class="a" style="left:698px;top:586px;" width="5" height="8" viewBox="0 0 5 8"><path d="M0 0l4.5 4L0 8z" fill="#111"/></svg>
<div class="t" style="left:533px;top:606.84px;font-size:12px;color:#7f7f7f;">Convert Variable to Text</div>
<div class="a" style="left:711px;top:580px;width:162px;height:72px;background:rgba(0,0,0,.35);filter:blur(2px)"></div>
<div class="a" style="left:708px;top:577px;width:162px;height:72px;background:#f0f0f0;border:1px solid #979797"></div>
<div class="a" style="left:737px;top:579px;width:1px;height:68px;background:#e2e2e2"></div>
<div class="a" style="left:738px;top:579px;width:1px;height:68px;background:#fff"></div>
<div class="t" style="left:743px;top:584.84px;font-size:12px;color:#7f7f7f;">File Name</div>
<div class="t" style="left:743px;top:606.84px;font-size:12px;color:#7f7f7f;">Print Number</div>
<div class="t" style="left:743px;top:628.84px;font-size:12px;color:#7f7f7f;">Variable 1</div>
<div class="a" style="left:0px;top:1039px;width:1920px;height:41px;background:linear-gradient(90deg,#5c5c5c,#6a6a6a 15%,#777 35%,#7d7d7d 55%,#6e6e6e 75%,#737373);border-top:1px solid #dcdcdc"></div>
<div class="a" style="left:0px;top:1040px;width:1920px;height:1px;background:#2e2e2e"></div>
<div class="a" style="left:9px;top:1042px;width:37px;height:37px;border-radius:50%;background:radial-gradient(circle at 50% 40%,#7ec3ea,#2a6fb0 55%,#0d3b6e);border:1px solid #1b3550"></div>
<svg class="a" style="left:16px;top:1049px;" width="23" height="22" viewBox="0 0 23 22"><path d="M2 4c3-2 6-2 9 0v7c-3-2-6-2-9 0z" fill="#f25022"/><path d="M12 4c3 2 6 2 9 0v7c-3 2-6 2-9 0z" fill="#7fba00"/><path d="M2 12c3-2 6-2 9 0v7c-3-2-6-2-9 0z" fill="#00a4ef"/><path d="M12 12c3 2 6 2 9 0v7c-3 2-6 2-9 0z" fill="#ffb900"/></svg>
<div class="a" style="left:60px;top:1041px;width:58px;height:38px;border:1px solid #3c3c3c;border-radius:3px;background:linear-gradient(160deg,#b4b4b4,#8e8e8e 35%,#7a7a7a 60%,#747474);box-shadow:inset 0 0 0 1px rgba(255,255,255,.35)"></div>
<div class="a" style="left:122px;top:1041px;width:58px;height:38px;border:1px solid #3c3c3c;border-radius:3px;background:linear-gradient(160deg,#b4b4b4,#8e8e8e 35%,#7a7a7a 60%,#747474);box-shadow:inset 0 0 0 1px rgba(255,255,255,.35)"></div>
<div class="a" style="left:246px;top:1041px;width:58px;height:38px;border:1px solid #3c3c3c;border-radius:3px;background:linear-gradient(160deg,#b4b4b4,#8e8e8e 35%,#7a7a7a 60%,#747474);box-shadow:inset 0 0 0 1px rgba(255,255,255,.35)"></div>
<div class="a" style="left:308px;top:1041px;width:58px;height:38px;border:1px solid #3c3c3c;border-radius:3px;background:linear-gradient(160deg,#b4b4b4,#8e8e8e 35%,#7a7a7a 60%,#747474);box-shadow:inset 0 0 0 1px rgba(255,255,255,.35)"></div>
<div class="a" style="left:494px;top:1041px;width:58px;height:38px;border:1px solid #3c3c3c;border-radius:3px;background:linear-gradient(160deg,#b4b4b4,#8e8e8e 35%,#7a7a7a 60%,#747474);box-shadow:inset 0 0 0 1px rgba(255,255,255,.35)"></div>
<div class="a" style="left:556px;top:1041px;width:58px;height:38px;border:1px solid #3c3c3c;border-radius:3px;background:linear-gradient(160deg,#c8c8c8,#a0a0a0 35%,#8a8a8a 60%,#808080);box-shadow:inset 0 0 0 1px rgba(255,255,255,.35)"></div>
<svg class="a" style="left:73px;top:1045px;" width="32" height="32" viewBox="0 0 32 32"><path d="M25 23A10 10 0 1 1 26 16H8" fill="none" stroke="#2aa7e8" stroke-width="5"/><path d="M5 28c-4-5 10-21 22-24 4-1 3 5-1 9" fill="none" stroke="#f2b818" stroke-width="2.4"/></svg>
<svg class="a" style="left:135px;top:1045px;" width="32" height="32" viewBox="0 0 32 32"><path d="M2 6h10l2 3h15v18H2z" fill="#e8cf78"/><path d="M2 11h27v16H2z" fill="#f6e39a"/><path d="M7 28v-8a2 2 0 0 1 2-2h14a2 2 0 0 1 2 2v8h-4v-6H11v6z" fill="#4fb2e8"/><rect x="6" y="5" width="3" height="2" fill="#2a2"/><rect x="12" y="7" width="3" height="2" fill="#d22"/></svg>
<svg class="a" style="left:197px;top:1045px;" width="32" height="32" viewBox="0 0 32 32"><rect x="7" y="5" width="19" height="22" fill="#8fc4e8" stroke="#5aa0d0"/><circle cx="15" cy="16" r="8" fill="#ef7b22"/><path d="M12 11l8 5-8 5z" fill="#fff"/></svg>
<svg class="a" style="left:259px;top:1045px;" width="32" height="32" viewBox="0 0 32 32"><circle cx="16" cy="16" r="14" fill="#dd4b39"/><path d="M16 16L3.9 23A14 14 0 0 0 16 30z" fill="#1ea362"/><path d="M16 16L28.1 9A14 14 0 0 1 16 30L16 16" fill="#ffcd40"/><path d="M16 16L3.9 23A14 14 0 0 1 2 16 14 14 0 0 1 3.9 9z" fill="#1ea362"/><circle cx="16" cy="16" r="6.5" fill="#fff"/><circle cx="16" cy="16" r="5" fill="#4a8af4"/></svg>
<svg class="a" style="left:321px;top:1045px;" width="32" height="32" viewBox="0 0 32 32"><rect x="3" y="3" width="22" height="24" fill="#fbd45b" stroke="#e6a817"/><circle cx="11" cy="15" r="6" fill="none" stroke="#e87d1e" stroke-width="3.5"/><rect x="16" y="19" width="14" height="10" fill="#fae8a6" stroke="#d2b050"/><circle cx="24" cy="12" r="4" fill="#fff" stroke="#e6a817"/></svg>
<svg class="a" style="left:383px;top:1045px;" width="32" height="32" viewBox="0 0 32 32"><rect x="3" y="3" width="24" height="26" fill="#f3b191" stroke="#d24726"/><path d="M7 24V8h6a4.5 4.5 0 0 1 0 9H10v7z" fill="#d24726"/><path d="M14 17l13 5-4 8-13-4z" fill="#fff"/><circle cx="19" cy="20" r="3" fill="#e86a4a"/></svg>
<svg class="a" style="left:445px;top:1045px;" width="32" height="32" viewBox="0 0 32 32"><rect x="3" y="3" width="24" height="26" fill="#a9c7ef" stroke="#2b5797"/><path d="M5 8l3 14 3-10 3 10 3-14" fill="none" stroke="#1f4e9a" stroke-width="3"/><path d="M14 19l13 4-3 7-12-4z" fill="#fff"/></svg>
<svg class="a" style="left:507px;top:1045px;" width="32" height="32" viewBox="0 0 32 32"><rect x="3" y="3" width="24" height="26" fill="#c6e3b8" stroke="#207245"/><path d="M7 8l10 14M17 8L7 22" stroke="#1a7241" stroke-width="3.5"/><path d="M14 18l14 4-3 8-12-4z" fill="#fff"/><path d="M16 22l9 3M15 25l9 3" stroke="#3a9a5a"/></svg>
<div class="a" style="left:570px;top:1046px;width:30px;height:29px;background:#49021f;border:2px solid #ff3399"></div>
<div class="t" style="left:577px;top:1056.15px;font-size:14px;color:#ff3399;font-weight:bold;">Id</div>
<svg class="a" style="left:1591px;top:1054px;" width="20" height="14" viewBox="0 0 20 14"><rect x="1" y="1" width="18" height="12" fill="#f1d27e" stroke="#c9a34a"/><path d="M1 1l9 7 9-7" fill="none" stroke="#c9a34a"/></svg>
<svg class="a" style="left:1619px;top:1053px;" width="16" height="16" viewBox="0 0 16 16"><rect x="0.5" y="0.5" width="15" height="15" fill="#f6b415" stroke="#e09400"/><circle cx="8" cy="8" r="4" fill="none" stroke="#fff" stroke-width="2.5"/></svg>
<svg class="a" style="left:1643px;top:1053px;" width="16" height="16" viewBox="0 0 16 16"><rect x="0.5" y="0.5" width="15" height="15" fill="#3c9fe0" stroke="#1f6fb0"/><path d="M4 4h7v5H4z" fill="none" stroke="#fff"/><path d="M5 12h8" stroke="#fff"/></svg>
<svg class="a" style="left:1667px;top:1055px;" width="17" height="13" viewBox="0 0 17 13"><ellipse cx="8.5" cy="6.5" rx="8" ry="5.5" fill="#d47a2f"/><ellipse cx="8.5" cy="5" rx="8" ry="4" fill="#d9b04a"/></svg>
<svg class="a" style="left:1691px;top:1053px;" width="16" height="16" viewBox="0 0 16 16"><rect x="1" y="8" width="14" height="7" fill="#ccc" stroke="#333"/><rect x="6" y="1" width="9" height="7" fill="#fff" stroke="#222"/><path d="M8 3h5M8 5h5" stroke="#2244cc"/><rect x="1" y="3" width="4" height="4" fill="#2a2"/></svg>
<svg class="a" style="left:1716px;top:1053px;" width="15" height="16" viewBox="0 0 15 16"><path d="M1 2l6.5 4L14 2v11l-6.5 3L1 13z" fill="#c8161d"/><path d="M4 6l3.5 4L11 6v5l-3.5 2L4 11z" fill="#6b6b6b"/></svg>
<svg class="a" style="left:1739px;top:1055px;" width="16" height="12" viewBox="0 0 16 12"><rect x="1" y="2" width="8" height="8" rx="4" fill="none" stroke="#fff" stroke-width="1.8"/><rect x="7" y="2" width="8" height="8" rx="4" fill="none" stroke="#fff" stroke-width="1.8"/></svg>
<svg class="a" style="left:1763px;top:1053px;" width="16" height="16" viewBox="0 0 16 16"><rect x="5" y="5" width="10" height="8" fill="none" stroke="#eee" stroke-width="1.5"/><path d="M10 13v3M7 16h6M2 1v10M1 3h2" stroke="#eee" stroke-width="1.3"/></svg>
<svg class="a" style="left:1787px;top:1053px;" width="17" height="16" viewBox="0 0 17 16"><path d="M1 5h3l4-4v14l-4-4H1z" fill="#eee"/><path d="M10 5a4 4 0 0 1 0 6M12 3a7 7 0 0 1 0 10" fill="none" stroke="#eee" stroke-width="1.2"/></svg>
<svg class="a" style="left:1811px;top:1052px;" width="15" height="17" viewBox="0 0 15 17"><path d="M1 0v17" stroke="#eee" stroke-width="1.5"/><path d="M2 1h6l1 2h5l-2 3 2 3H8L7 7H2z" fill="#eee"/></svg>
<div class="t" style="left:1847px;top:1046.84px;font-size:12px;color:#ffffff;letter-spacing:-0.005px;">9:13 AM</div>
<div class="t" style="left:1843px;top:1063.34px;font-size:12px;color:#ffffff;letter-spacing:-0.174px;">9/26/2018</div>
<div class="a" style="left:1906px;top:1041px;width:14px;height:39px;border:1px solid #7a7a7a;background:linear-gradient(90deg,#8a8a8a,#9c9c9c)"></div></body></html>
